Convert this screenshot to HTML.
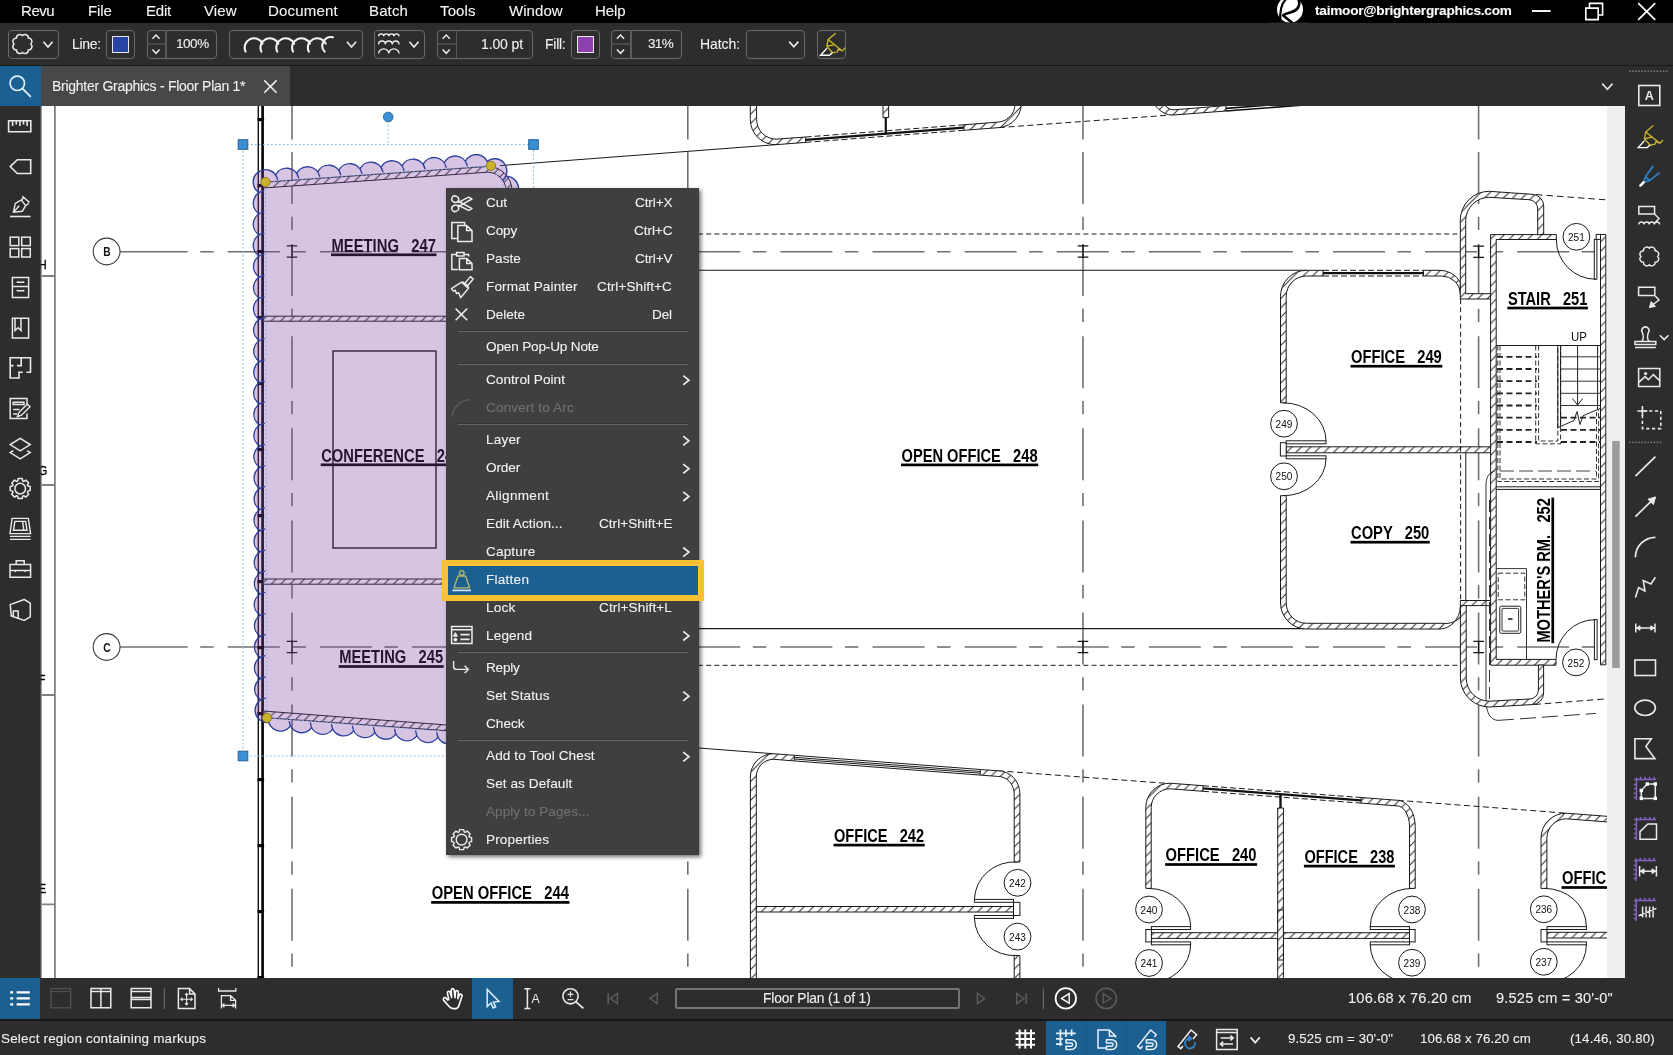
<!DOCTYPE html>
<html><head><meta charset="utf-8"><title>Revu - Floor Plan</title>
<style>
html,body{margin:0;padding:0;}
body{width:1673px;height:1055px;position:relative;overflow:hidden;background:#2d2d2d;font-family:"Liberation Sans",sans-serif;}
.t{position:absolute;white-space:pre;line-height:20px;height:20px;}
.abs{position:absolute;}
.box{position:absolute;box-sizing:border-box;border:1.5px solid #6a6a6a;border-radius:4px;}
svg{position:absolute;left:0;top:0;overflow:visible;will-change:transform;}
.t{will-change:transform;-webkit-text-stroke:0.1px currentColor;}
</style></head>
<body>
<div class="abs" style="left:0;top:0;width:1673px;height:22.5px;background:#000"></div>
<span class="t " style="left:21.30px;top:1.17px;font-size:15px;letter-spacing:-0.454px;color:#f5f5f5;">Revu</span>
<span class="t " style="left:87.90px;top:1.17px;font-size:15px;letter-spacing:-0.093px;color:#f5f5f5;">File</span>
<span class="t " style="left:145.60px;top:1.17px;font-size:15px;letter-spacing:-0.212px;color:#f5f5f5;">Edit</span>
<span class="t " style="left:203.90px;top:1.17px;font-size:15px;letter-spacing:0.089px;color:#f5f5f5;">View</span>
<span class="t " style="left:267.90px;top:1.17px;font-size:15px;letter-spacing:0.179px;color:#f5f5f5;">Document</span>
<span class="t " style="left:369.00px;top:1.17px;font-size:15px;letter-spacing:0.128px;color:#f5f5f5;">Batch</span>
<span class="t " style="left:440.30px;top:1.17px;font-size:15px;letter-spacing:0.136px;color:#f5f5f5;">Tools</span>
<span class="t " style="left:508.50px;top:1.17px;font-size:15px;letter-spacing:0.058px;color:#f5f5f5;">Window</span>
<span class="t " style="left:595.40px;top:1.17px;font-size:15px;letter-spacing:-0.063px;color:#f5f5f5;">Help</span>
<span class="t " style="left:1314.60px;top:1.14px;font-size:13.6px;letter-spacing:-0.223px;color:#ffffff;font-weight:bold;">taimoor@brightergraphics.com</span>
<div class="abs" style="left:0;top:22.5px;width:1673px;height:42.5px;background:#2d2d2d"></div>
<div class="abs" style="left:0;top:64.5px;width:1673px;height:1.5px;background:#181818"></div>
<div class="box" style="left:8px;top:29.5px;width:51px;height:29px"></div>
<div class="box" style="left:106px;top:29.5px;width:29px;height:29px"></div>
<div class="box" style="left:147px;top:29.5px;width:70px;height:29px"></div>
<div class="box" style="left:229px;top:29.5px;width:134px;height:29px"></div>
<div class="box" style="left:374px;top:29.5px;width:51px;height:29px"></div>
<div class="box" style="left:437px;top:29.5px;width:96px;height:29px"></div>
<div class="box" style="left:571px;top:29.5px;width:29px;height:29px"></div>
<div class="box" style="left:611px;top:29.5px;width:71px;height:29px"></div>
<div class="box" style="left:746px;top:29.5px;width:59px;height:29px"></div>
<div class="box" style="left:816.5px;top:29.5px;width:29.0px;height:29px"></div>
<div class="abs" style="left:165px;top:30px;width:1.5px;height:28px;background:#5a5a5a"></div>
<div class="abs" style="left:455.5px;top:30px;width:1.5px;height:28px;background:#5a5a5a"></div>
<div class="abs" style="left:630px;top:30px;width:1.5px;height:28px;background:#5a5a5a"></div>
<div class="abs" style="left:112px;top:35.5px;width:15px;height:15px;background:#2743a6;border:1.5px solid #e8e8e8"></div>
<div class="abs" style="left:577px;top:35.5px;width:15px;height:15px;background:#8e3fb0;border:1.5px solid #e8e8e8"></div>
<span class="t " style="left:71.60px;top:33.85px;font-size:14px;letter-spacing:-0.312px;color:#f0f0f0;">Line:</span>
<span class="t " style="left:175.70px;top:33.84px;font-size:13.5px;letter-spacing:-0.457px;color:#f0f0f0;">100%</span>
<span class="t " style="left:481.30px;top:33.85px;font-size:14px;letter-spacing:-0.116px;color:#f0f0f0;">1.00 pt</span>
<span class="t " style="left:544.50px;top:33.85px;font-size:14px;letter-spacing:-0.255px;color:#f0f0f0;">Fill:</span>
<span class="t " style="left:648.00px;top:33.84px;font-size:13.5px;letter-spacing:-0.673px;color:#f0f0f0;">31%</span>
<span class="t " style="left:699.70px;top:33.85px;font-size:14px;letter-spacing:-0.077px;color:#f0f0f0;">Hatch:</span>
<div class="abs" style="left:0;top:66px;width:1673px;height:40px;background:#2d2d2d"></div>
<div class="abs" style="left:0;top:66px;width:40.5px;height:40px;background:#1c5f91"></div>
<div class="abs" style="left:40.5px;top:66px;width:249.5px;height:40px;background:#484848"></div>
<span class="t " style="left:51.50px;top:75.85px;font-size:14px;letter-spacing:-0.273px;color:#f0f0f0;">Brighter Graphics - Floor Plan 1*</span>
<div class="abs" style="left:0;top:106px;width:40.5px;height:872px;background:#2d2d2d"></div>
<div class="abs" style="left:1625px;top:66px;width:48px;height:954px;background:#2d2d2d"></div>
<div class="abs" style="left:0;top:978px;width:1673px;height:42px;background:#2d2d2d"></div>
<div class="abs" style="left:0;top:978px;width:40.3px;height:41.5px;background:#1c5f91"></div>
<div class="abs" style="left:472px;top:978px;width:40.5px;height:41.5px;background:#1c5f91"></div>
<div class="abs" style="left:0;top:1019px;width:1673px;height:2px;background:#161616"></div>
<div class="box" style="left:674.8px;top:987.8px;width:285px;height:21.6px;border:2px solid #747474;border-radius:2.5px"></div>
<span class="t " style="left:763.10px;top:988.55px;font-size:13.8px;letter-spacing:-0.150px;color:#f0f0f0;">Floor Plan (1 of 1)</span>
<span class="t " style="left:1348.40px;top:987.86px;font-size:14.6px;letter-spacing:0.216px;color:#f0f0f0;">106.68 x 76.20 cm</span>
<span class="t " style="left:1495.70px;top:987.86px;font-size:14.6px;letter-spacing:0.183px;color:#f0f0f0;">9.525 cm = 30'-0&quot;</span>
<div class="abs" style="left:0;top:1021px;width:1673px;height:34px;background:#2d2d2d"></div>
<div class="abs" style="left:1046px;top:1021px;width:120.3px;height:34px;background:#1c5f91"></div>
<span class="t " style="left:0.60px;top:1029.24px;font-size:13.5px;letter-spacing:0.174px;color:#f0f0f0;">Select region containing markups</span>
<span class="t " style="left:1288.20px;top:1029.24px;font-size:13.3px;letter-spacing:0.074px;color:#f0f0f0;">9.525 cm = 30'-0&quot;</span>
<span class="t " style="left:1420.00px;top:1029.24px;font-size:13.3px;letter-spacing:0.092px;color:#f0f0f0;">106.68 x 76.20 cm</span>
<span class="t " style="left:1569.70px;top:1029.24px;font-size:13.3px;letter-spacing:0.142px;color:#f0f0f0;">(14.46, 30.80)</span>
<svg width="1673" height="1055" viewBox="0 0 1673 1055">
<defs>
<clipPath id="cv"><rect x="40.5" y="106" width="1584.5" height="872"/></clipPath>
<clipPath id="pg"><rect x="40.5" y="106" width="1566.5" height="872"/></clipPath>
<pattern id="hat" width="9.4" height="9.4" patternUnits="userSpaceOnUse"><rect width="9.4" height="9.4" fill="#fff"/><path d="M-2,2 L2,-2 M0,9.4 L9.4,0 M7.4,11.4 L11.4,7.4" stroke="#222" stroke-width="0.95"/></pattern>
</defs>
<g clip-path="url(#cv)">
<rect x="40.5" y="106" width="1584.5" height="872" fill="#fff"/>
<rect x="1607" y="106" width="18" height="872" fill="#efefef"/>
<rect x="1612.2" y="441" width="7.5" height="227" fill="#9b9b9b"/>
<g clip-path="url(#pg)">
<line x1="40.9" y1="106" x2="40.9" y2="978" stroke="#000" stroke-width="1" />
<line x1="54.9" y1="106" x2="54.9" y2="978" stroke="#808080" stroke-width="1.8" />
<line x1="42" y1="276" x2="54.9" y2="276" stroke="#808080" stroke-width="1.8" />
<line x1="42" y1="485" x2="54.9" y2="485" stroke="#808080" stroke-width="1.8" />
<line x1="42" y1="695" x2="54.9" y2="695" stroke="#808080" stroke-width="1.8" />
<line x1="42" y1="904.4" x2="54.9" y2="904.4" stroke="#808080" stroke-width="1.8" />
<text transform="translate(38.6,268.6) scale(.83,1)" font-size="13.7" fill="#000" stroke="#000" stroke-width=".35">H</text>
<text transform="translate(38.6,474.7) scale(.83,1)" font-size="13.7" fill="#000" stroke="#000" stroke-width=".35">G</text>
<text transform="translate(38.6,684.2) scale(.83,1)" font-size="13.7" fill="#000" stroke="#000" stroke-width=".35">F</text>
<text transform="translate(38.6,893.4) scale(.83,1)" font-size="13.7" fill="#000" stroke="#000" stroke-width=".35">E</text>
<line x1="292" y1="106" x2="292" y2="139.6" stroke="#707070" stroke-width="1.6" /><line x1="292" y1="152.0" x2="292" y2="204.0" stroke="#707070" stroke-width="1.6" /><line x1="292" y1="216.7" x2="292" y2="230.0" stroke="#707070" stroke-width="1.6" /><line x1="292" y1="244.1" x2="292" y2="296.1" stroke="#707070" stroke-width="1.6" /><line x1="292" y1="308.8" x2="292" y2="322.1" stroke="#707070" stroke-width="1.6" /><line x1="292" y1="336.2" x2="292" y2="388.2" stroke="#707070" stroke-width="1.6" /><line x1="292" y1="400.9" x2="292" y2="414.2" stroke="#707070" stroke-width="1.6" /><line x1="292" y1="428.29999999999995" x2="292" y2="480.29999999999995" stroke="#707070" stroke-width="1.6" /><line x1="292" y1="492.99999999999994" x2="292" y2="506.29999999999995" stroke="#707070" stroke-width="1.6" /><line x1="292" y1="520.4" x2="292" y2="572.4" stroke="#707070" stroke-width="1.6" /><line x1="292" y1="585.1" x2="292" y2="598.4" stroke="#707070" stroke-width="1.6" /><line x1="292" y1="612.5" x2="292" y2="664.5" stroke="#707070" stroke-width="1.6" /><line x1="292" y1="677.2" x2="292" y2="690.5" stroke="#707070" stroke-width="1.6" /><line x1="292" y1="704.6" x2="292" y2="756.6" stroke="#707070" stroke-width="1.6" /><line x1="292" y1="769.3000000000001" x2="292" y2="782.6" stroke="#707070" stroke-width="1.6" /><line x1="292" y1="796.7" x2="292" y2="848.7" stroke="#707070" stroke-width="1.6" /><line x1="292" y1="861.4000000000001" x2="292" y2="874.7" stroke="#707070" stroke-width="1.6" /><line x1="292" y1="888.8000000000001" x2="292" y2="940.8000000000001" stroke="#707070" stroke-width="1.6" /><line x1="292" y1="953.5000000000001" x2="292" y2="966.8000000000001" stroke="#707070" stroke-width="1.6" />
<line x1="687.8" y1="106" x2="687.8" y2="139.6" stroke="#707070" stroke-width="1.6" /><line x1="687.8" y1="152.0" x2="687.8" y2="204.0" stroke="#707070" stroke-width="1.6" /><line x1="687.8" y1="216.7" x2="687.8" y2="230.0" stroke="#707070" stroke-width="1.6" /><line x1="687.8" y1="244.1" x2="687.8" y2="296.1" stroke="#707070" stroke-width="1.6" /><line x1="687.8" y1="308.8" x2="687.8" y2="322.1" stroke="#707070" stroke-width="1.6" /><line x1="687.8" y1="336.2" x2="687.8" y2="388.2" stroke="#707070" stroke-width="1.6" /><line x1="687.8" y1="400.9" x2="687.8" y2="414.2" stroke="#707070" stroke-width="1.6" /><line x1="687.8" y1="428.29999999999995" x2="687.8" y2="480.29999999999995" stroke="#707070" stroke-width="1.6" /><line x1="687.8" y1="492.99999999999994" x2="687.8" y2="506.29999999999995" stroke="#707070" stroke-width="1.6" /><line x1="687.8" y1="520.4" x2="687.8" y2="572.4" stroke="#707070" stroke-width="1.6" /><line x1="687.8" y1="585.1" x2="687.8" y2="598.4" stroke="#707070" stroke-width="1.6" /><line x1="687.8" y1="612.5" x2="687.8" y2="664.5" stroke="#707070" stroke-width="1.6" /><line x1="687.8" y1="677.2" x2="687.8" y2="690.5" stroke="#707070" stroke-width="1.6" /><line x1="687.8" y1="704.6" x2="687.8" y2="756.6" stroke="#707070" stroke-width="1.6" /><line x1="687.8" y1="769.3000000000001" x2="687.8" y2="782.6" stroke="#707070" stroke-width="1.6" /><line x1="687.8" y1="796.7" x2="687.8" y2="848.7" stroke="#707070" stroke-width="1.6" /><line x1="687.8" y1="861.4000000000001" x2="687.8" y2="874.7" stroke="#707070" stroke-width="1.6" /><line x1="687.8" y1="888.8000000000001" x2="687.8" y2="940.8000000000001" stroke="#707070" stroke-width="1.6" /><line x1="687.8" y1="953.5000000000001" x2="687.8" y2="966.8000000000001" stroke="#707070" stroke-width="1.6" />
<line x1="1083" y1="106" x2="1083" y2="139.6" stroke="#707070" stroke-width="1.6" /><line x1="1083" y1="152.0" x2="1083" y2="204.0" stroke="#707070" stroke-width="1.6" /><line x1="1083" y1="216.7" x2="1083" y2="230.0" stroke="#707070" stroke-width="1.6" /><line x1="1083" y1="244.1" x2="1083" y2="296.1" stroke="#707070" stroke-width="1.6" /><line x1="1083" y1="308.8" x2="1083" y2="322.1" stroke="#707070" stroke-width="1.6" /><line x1="1083" y1="336.2" x2="1083" y2="388.2" stroke="#707070" stroke-width="1.6" /><line x1="1083" y1="400.9" x2="1083" y2="414.2" stroke="#707070" stroke-width="1.6" /><line x1="1083" y1="428.29999999999995" x2="1083" y2="480.29999999999995" stroke="#707070" stroke-width="1.6" /><line x1="1083" y1="492.99999999999994" x2="1083" y2="506.29999999999995" stroke="#707070" stroke-width="1.6" /><line x1="1083" y1="520.4" x2="1083" y2="572.4" stroke="#707070" stroke-width="1.6" /><line x1="1083" y1="585.1" x2="1083" y2="598.4" stroke="#707070" stroke-width="1.6" /><line x1="1083" y1="612.5" x2="1083" y2="664.5" stroke="#707070" stroke-width="1.6" /><line x1="1083" y1="677.2" x2="1083" y2="690.5" stroke="#707070" stroke-width="1.6" /><line x1="1083" y1="704.6" x2="1083" y2="756.6" stroke="#707070" stroke-width="1.6" /><line x1="1083" y1="769.3000000000001" x2="1083" y2="782.6" stroke="#707070" stroke-width="1.6" /><line x1="1083" y1="796.7" x2="1083" y2="848.7" stroke="#707070" stroke-width="1.6" /><line x1="1083" y1="861.4000000000001" x2="1083" y2="874.7" stroke="#707070" stroke-width="1.6" /><line x1="1083" y1="888.8000000000001" x2="1083" y2="940.8000000000001" stroke="#707070" stroke-width="1.6" /><line x1="1083" y1="953.5000000000001" x2="1083" y2="966.8000000000001" stroke="#707070" stroke-width="1.6" />
<line x1="1478.6" y1="106" x2="1478.6" y2="139.6" stroke="#707070" stroke-width="1.6" /><line x1="1478.6" y1="152.0" x2="1478.6" y2="204.0" stroke="#707070" stroke-width="1.6" /><line x1="1478.6" y1="216.7" x2="1478.6" y2="230.0" stroke="#707070" stroke-width="1.6" /><line x1="1478.6" y1="244.1" x2="1478.6" y2="296.1" stroke="#707070" stroke-width="1.6" /><line x1="1478.6" y1="308.8" x2="1478.6" y2="322.1" stroke="#707070" stroke-width="1.6" /><line x1="1478.6" y1="336.2" x2="1478.6" y2="388.2" stroke="#707070" stroke-width="1.6" /><line x1="1478.6" y1="400.9" x2="1478.6" y2="414.2" stroke="#707070" stroke-width="1.6" /><line x1="1478.6" y1="428.29999999999995" x2="1478.6" y2="480.29999999999995" stroke="#707070" stroke-width="1.6" /><line x1="1478.6" y1="492.99999999999994" x2="1478.6" y2="506.29999999999995" stroke="#707070" stroke-width="1.6" /><line x1="1478.6" y1="520.4" x2="1478.6" y2="572.4" stroke="#707070" stroke-width="1.6" /><line x1="1478.6" y1="585.1" x2="1478.6" y2="598.4" stroke="#707070" stroke-width="1.6" /><line x1="1478.6" y1="612.5" x2="1478.6" y2="664.5" stroke="#707070" stroke-width="1.6" /><line x1="1478.6" y1="677.2" x2="1478.6" y2="690.5" stroke="#707070" stroke-width="1.6" /><line x1="1478.6" y1="704.6" x2="1478.6" y2="756.6" stroke="#707070" stroke-width="1.6" /><line x1="1478.6" y1="769.3000000000001" x2="1478.6" y2="782.6" stroke="#707070" stroke-width="1.6" /><line x1="1478.6" y1="796.7" x2="1478.6" y2="848.7" stroke="#707070" stroke-width="1.6" /><line x1="1478.6" y1="861.4000000000001" x2="1478.6" y2="874.7" stroke="#707070" stroke-width="1.6" /><line x1="1478.6" y1="888.8000000000001" x2="1478.6" y2="940.8000000000001" stroke="#707070" stroke-width="1.6" /><line x1="1478.6" y1="953.5000000000001" x2="1478.6" y2="966.8000000000001" stroke="#707070" stroke-width="1.6" />
<line x1="120" y1="251.7" x2="187.7" y2="251.7" stroke="#707070" stroke-width="1.6" />
<line x1="200.2" y1="251.7" x2="213.7" y2="251.7" stroke="#707070" stroke-width="1.6" /><line x1="227.79999999999998" y1="251.7" x2="279.79999999999995" y2="251.7" stroke="#707070" stroke-width="1.6" /><line x1="292.29999999999995" y1="251.7" x2="305.79999999999995" y2="251.7" stroke="#707070" stroke-width="1.6" /><line x1="319.9" y1="251.7" x2="371.9" y2="251.7" stroke="#707070" stroke-width="1.6" /><line x1="384.4" y1="251.7" x2="397.9" y2="251.7" stroke="#707070" stroke-width="1.6" /><line x1="412.0" y1="251.7" x2="464.0" y2="251.7" stroke="#707070" stroke-width="1.6" /><line x1="476.5" y1="251.7" x2="490.0" y2="251.7" stroke="#707070" stroke-width="1.6" /><line x1="504.1" y1="251.7" x2="556.1" y2="251.7" stroke="#707070" stroke-width="1.6" /><line x1="568.6" y1="251.7" x2="582.1" y2="251.7" stroke="#707070" stroke-width="1.6" /><line x1="596.2" y1="251.7" x2="648.2" y2="251.7" stroke="#707070" stroke-width="1.6" /><line x1="660.7" y1="251.7" x2="674.2" y2="251.7" stroke="#707070" stroke-width="1.6" /><line x1="688.3000000000001" y1="251.7" x2="740.3000000000001" y2="251.7" stroke="#707070" stroke-width="1.6" /><line x1="752.8000000000001" y1="251.7" x2="766.3000000000001" y2="251.7" stroke="#707070" stroke-width="1.6" /><line x1="780.4000000000001" y1="251.7" x2="832.4000000000001" y2="251.7" stroke="#707070" stroke-width="1.6" /><line x1="844.9000000000001" y1="251.7" x2="858.4000000000001" y2="251.7" stroke="#707070" stroke-width="1.6" /><line x1="872.5000000000001" y1="251.7" x2="924.5000000000001" y2="251.7" stroke="#707070" stroke-width="1.6" /><line x1="937.0000000000001" y1="251.7" x2="950.5000000000001" y2="251.7" stroke="#707070" stroke-width="1.6" /><line x1="964.6000000000001" y1="251.7" x2="1016.6000000000001" y2="251.7" stroke="#707070" stroke-width="1.6" /><line x1="1029.1000000000001" y1="251.7" x2="1042.6000000000001" y2="251.7" stroke="#707070" stroke-width="1.6" /><line x1="1056.7" y1="251.7" x2="1108.7" y2="251.7" stroke="#707070" stroke-width="1.6" /><line x1="1121.2" y1="251.7" x2="1134.7" y2="251.7" stroke="#707070" stroke-width="1.6" /><line x1="1148.8" y1="251.7" x2="1200.8" y2="251.7" stroke="#707070" stroke-width="1.6" /><line x1="1213.3" y1="251.7" x2="1226.8" y2="251.7" stroke="#707070" stroke-width="1.6" /><line x1="1240.8999999999999" y1="251.7" x2="1292.8999999999999" y2="251.7" stroke="#707070" stroke-width="1.6" /><line x1="1305.3999999999999" y1="251.7" x2="1318.8999999999999" y2="251.7" stroke="#707070" stroke-width="1.6" /><line x1="1332.9999999999998" y1="251.7" x2="1384.9999999999998" y2="251.7" stroke="#707070" stroke-width="1.6" /><line x1="1397.4999999999998" y1="251.7" x2="1410.9999999999998" y2="251.7" stroke="#707070" stroke-width="1.6" /><line x1="1425.0999999999997" y1="251.7" x2="1477.0999999999997" y2="251.7" stroke="#707070" stroke-width="1.6" /><line x1="1489.5999999999997" y1="251.7" x2="1503.0999999999997" y2="251.7" stroke="#707070" stroke-width="1.6" /><line x1="1517.1999999999996" y1="251.7" x2="1569.1999999999996" y2="251.7" stroke="#707070" stroke-width="1.6" /><line x1="1581.6999999999996" y1="251.7" x2="1595.1999999999996" y2="251.7" stroke="#707070" stroke-width="1.6" />
<line x1="120" y1="647" x2="187.7" y2="647" stroke="#707070" stroke-width="1.6" />
<line x1="200.2" y1="647" x2="213.7" y2="647" stroke="#707070" stroke-width="1.6" /><line x1="227.79999999999998" y1="647" x2="279.79999999999995" y2="647" stroke="#707070" stroke-width="1.6" /><line x1="292.29999999999995" y1="647" x2="305.79999999999995" y2="647" stroke="#707070" stroke-width="1.6" /><line x1="319.9" y1="647" x2="371.9" y2="647" stroke="#707070" stroke-width="1.6" /><line x1="384.4" y1="647" x2="397.9" y2="647" stroke="#707070" stroke-width="1.6" /><line x1="412.0" y1="647" x2="464.0" y2="647" stroke="#707070" stroke-width="1.6" /><line x1="476.5" y1="647" x2="490.0" y2="647" stroke="#707070" stroke-width="1.6" /><line x1="504.1" y1="647" x2="556.1" y2="647" stroke="#707070" stroke-width="1.6" /><line x1="568.6" y1="647" x2="582.1" y2="647" stroke="#707070" stroke-width="1.6" /><line x1="596.2" y1="647" x2="648.2" y2="647" stroke="#707070" stroke-width="1.6" /><line x1="660.7" y1="647" x2="674.2" y2="647" stroke="#707070" stroke-width="1.6" /><line x1="688.3000000000001" y1="647" x2="740.3000000000001" y2="647" stroke="#707070" stroke-width="1.6" /><line x1="752.8000000000001" y1="647" x2="766.3000000000001" y2="647" stroke="#707070" stroke-width="1.6" /><line x1="780.4000000000001" y1="647" x2="832.4000000000001" y2="647" stroke="#707070" stroke-width="1.6" /><line x1="844.9000000000001" y1="647" x2="858.4000000000001" y2="647" stroke="#707070" stroke-width="1.6" /><line x1="872.5000000000001" y1="647" x2="924.5000000000001" y2="647" stroke="#707070" stroke-width="1.6" /><line x1="937.0000000000001" y1="647" x2="950.5000000000001" y2="647" stroke="#707070" stroke-width="1.6" /><line x1="964.6000000000001" y1="647" x2="1016.6000000000001" y2="647" stroke="#707070" stroke-width="1.6" /><line x1="1029.1000000000001" y1="647" x2="1042.6000000000001" y2="647" stroke="#707070" stroke-width="1.6" /><line x1="1056.7" y1="647" x2="1108.7" y2="647" stroke="#707070" stroke-width="1.6" /><line x1="1121.2" y1="647" x2="1134.7" y2="647" stroke="#707070" stroke-width="1.6" /><line x1="1148.8" y1="647" x2="1200.8" y2="647" stroke="#707070" stroke-width="1.6" /><line x1="1213.3" y1="647" x2="1226.8" y2="647" stroke="#707070" stroke-width="1.6" /><line x1="1240.8999999999999" y1="647" x2="1292.8999999999999" y2="647" stroke="#707070" stroke-width="1.6" /><line x1="1305.3999999999999" y1="647" x2="1318.8999999999999" y2="647" stroke="#707070" stroke-width="1.6" /><line x1="1332.9999999999998" y1="647" x2="1384.9999999999998" y2="647" stroke="#707070" stroke-width="1.6" /><line x1="1397.4999999999998" y1="647" x2="1410.9999999999998" y2="647" stroke="#707070" stroke-width="1.6" /><line x1="1425.0999999999997" y1="647" x2="1477.0999999999997" y2="647" stroke="#707070" stroke-width="1.6" /><line x1="1489.5999999999997" y1="647" x2="1503.0999999999997" y2="647" stroke="#707070" stroke-width="1.6" /><line x1="1517.1999999999996" y1="647" x2="1569.1999999999996" y2="647" stroke="#707070" stroke-width="1.6" /><line x1="1581.6999999999996" y1="647" x2="1595.1999999999996" y2="647" stroke="#707070" stroke-width="1.6" />
<circle cx="106.6" cy="251.5" r="13.4" fill="#fff" stroke="#3a3a3a" stroke-width="1.1"/>
<text x="106.9" y="256.2" font-size="12.8" font-weight="bold" text-anchor="middle" fill="#111" transform="translate(106.9,0) scale(.8,1) translate(-106.9,0)">B</text>
<circle cx="106.6" cy="647" r="13.4" fill="#fff" stroke="#3a3a3a" stroke-width="1.1"/>
<text x="106.9" y="651.7" font-size="12.8" font-weight="bold" text-anchor="middle" fill="#111" transform="translate(106.9,0) scale(.8,1) translate(-106.9,0)">C</text>
<path d="M292,245.0V258.0M286.7,245.9H297.3M286.7,257.1H297.3" stroke="#111" stroke-width="1.3" fill="none" />
<path d="M1083,245.0V258.0M1077.7,245.9H1088.3M1077.7,257.1H1088.3" stroke="#111" stroke-width="1.3" fill="none" />
<path d="M1478.6,245.3V258.3M1473.3,246.20000000000002H1483.8999999999999M1473.3,257.40000000000003H1483.8999999999999" stroke="#111" stroke-width="1.3" fill="none" />
<path d="M292,640.5V653.5M286.7,641.4H297.3M286.7,652.6H297.3" stroke="#111" stroke-width="1.3" fill="none" />
<path d="M1083,640.5V653.5M1077.7,641.4H1088.3M1077.7,652.6H1088.3" stroke="#111" stroke-width="1.3" fill="none" />
<path d="M1478.6,640.5V653.5M1473.3,641.4H1483.8999999999999M1473.3,652.6H1483.8999999999999" stroke="#111" stroke-width="1.3" fill="none" />
<line x1="698" y1="234" x2="1461" y2="234" stroke="#1a1a1a" stroke-width="1" stroke-dasharray="5 3.2" />
<line x1="698" y1="270.3" x2="1307" y2="270.3" stroke="#1a1a1a" stroke-width="1.1" />
<line x1="698" y1="628.6" x2="1304" y2="628.6" stroke="#1a1a1a" stroke-width="1.1" />
<line x1="698" y1="665.3" x2="1460.5" y2="665.3" stroke="#1a1a1a" stroke-width="1" stroke-dasharray="5 3.2" />
<line x1="258.3" y1="106" x2="258.3" y2="978" stroke="#111" stroke-width="1.4" />
<line x1="262.6" y1="106" x2="262.6" y2="978" stroke="#000" stroke-width="2.6" />
<rect x="257.5" y="118.0" width="6.6" height="3.2" fill="#000"/>
<rect x="257.5" y="184.0" width="6.6" height="3.2" fill="#000"/>
<rect x="257.5" y="250.0" width="6.6" height="3.2" fill="#000"/>
<rect x="257.5" y="316.0" width="6.6" height="3.2" fill="#000"/>
<rect x="257.5" y="382.0" width="6.6" height="3.2" fill="#000"/>
<rect x="257.5" y="448.0" width="6.6" height="3.2" fill="#000"/>
<rect x="257.5" y="514.0" width="6.6" height="3.2" fill="#000"/>
<rect x="257.5" y="580.0" width="6.6" height="3.2" fill="#000"/>
<rect x="257.5" y="646.0" width="6.6" height="3.2" fill="#000"/>
<rect x="257.5" y="712.0" width="6.6" height="3.2" fill="#000"/>
<rect x="257.5" y="778.0" width="6.6" height="3.2" fill="#000"/>
<rect x="257.5" y="844.0" width="6.6" height="3.2" fill="#000"/>
<rect x="257.5" y="910.0" width="6.6" height="3.2" fill="#000"/>
<rect x="257.5" y="976.0" width="6.6" height="3.2" fill="#000"/>
<path d="M263.2,182.3 L488,166.4 A24.5,24.5 0 0 1 512,190 L512,200 L506,200 L506,190 A18.5,18.5 0 0 0 487.5,172.2 L263.2,188 Z" fill="url(#hat)" stroke="#1a1a1a" stroke-width="1" stroke-linejoin="round"/>
<path d="M263.2,316.2 H520 V321.2 H263.2 Z" fill="url(#hat)" stroke="#1a1a1a" stroke-width="1" stroke-linejoin="round"/>
<path d="M263.2,579 H520 V584.2 H263.2 Z" fill="url(#hat)" stroke="#1a1a1a" stroke-width="1" stroke-linejoin="round"/>
<path d="M263.2,711 L520,730.6 L520,736 L263.2,717.5 Z" fill="url(#hat)" stroke="#1a1a1a" stroke-width="1" stroke-linejoin="round"/>
<rect x="333" y="351" width="103" height="197" fill="none" stroke="#000" stroke-width="1.3"/>
<text transform="translate(331.5,251.6) scale(0.8318,1)" font-size="17.8" font-weight="bold" fill="#000" xml:space="preserve">MEETING   247</text><rect x="331.0" y="253.45" width="105.5" height="2.7" fill="#000"/>
<text transform="translate(321.2,461.6) scale(0.8300,1)" font-size="17.8" font-weight="bold" fill="#000" xml:space="preserve">CONFERENCE   246</text><rect x="320.7" y="463.45" width="141.3922434375" height="2.7" fill="#000"/>
<text transform="translate(339.2,663.3) scale(0.8278,1)" font-size="17.8" font-weight="bold" fill="#000" xml:space="preserve">MEETING   245</text><rect x="338.7" y="665.15" width="105" height="2.7" fill="#000"/>
<text transform="translate(901.5,461.7) scale(0.8245,1)" font-size="17.8" font-weight="bold" fill="#000" xml:space="preserve">OPEN OFFICE   248</text><rect x="901.0" y="463.54999999999995" width="137.2" height="2.7" fill="#000"/>
<text transform="translate(431.7,899.2) scale(0.8312,1)" font-size="17.8" font-weight="bold" fill="#000" xml:space="preserve">OPEN OFFICE   244</text><rect x="431.2" y="901.0500000000001" width="138.3" height="2.7" fill="#000"/>
<line x1="500" y1="165.6" x2="777" y2="144.6" stroke="#1a1a1a" stroke-width="1" />
<line x1="999" y1="127.6" x2="1167" y2="115.3" stroke="#1a1a1a" stroke-width="1" stroke-dasharray="6 3.5" />
<line x1="446" y1="728.7" x2="773" y2="753.7" stroke="#1a1a1a" stroke-width="1" />
<line x1="998" y1="770.8" x2="1170" y2="783.6" stroke="#1a1a1a" stroke-width="1" stroke-dasharray="6 3.5" />
<line x1="1397.6" y1="800.3" x2="1566.4" y2="813.2" stroke="#1a1a1a" stroke-width="1" stroke-dasharray="6 3.5" />
<path d="M1151,98 C1155,107 1162,114.6 1172,115.1 L1226,111 L1226,105.6 L1174,109.8 C1168,109.6 1164,106 1160.5,98 Z" fill="url(#hat)" stroke="#1a1a1a" stroke-width="1" stroke-linejoin="round"/>
<line x1="1226" y1="111" x2="1312" y2="104.4" stroke="#111" stroke-width="1.6" />
<line x1="1226" y1="108.4" x2="1290" y2="103.4" stroke="#111" stroke-width="1.6" />
<path d="M750.3,100 V119.5 A25.1,25.1 0 0 0 777,144.6 L805.6,142.4 L805.6,137 L777,139.1 A19.6,19.6 0 0 1 756.6,119.5 V100 Z" fill="url(#hat)" stroke="#1a1a1a" stroke-width="1" stroke-linejoin="round"/>
<path d="M963.9,130.3 L999,127.6 A24,24 0 0 0 1021,100 L1014.5,100 A18,18 0 0 1 998,122.1 L963.9,124.8 Z" fill="url(#hat)" stroke="#1a1a1a" stroke-width="1" stroke-linejoin="round"/>
<line x1="805.6" y1="139.9" x2="963.9" y2="127.7" stroke="#111" stroke-width="2.2" />
<line x1="805.6" y1="137" x2="963.9" y2="124.8" stroke="#1a1a1a" stroke-width="1" stroke-dasharray="6 3" />
<line x1="805.6" y1="142.4" x2="963.9" y2="130.3" stroke="#1a1a1a" stroke-width="1" stroke-dasharray="6 3" />
<path d="M883,100 H888.6 V117.6 H883 Z" fill="url(#hat)" stroke="#1a1a1a" stroke-width="1" stroke-linejoin="round"/>
<line x1="885.8" y1="117.6" x2="885.8" y2="134" stroke="#111" stroke-width="2.2" />
<path d="M750.4,985 V777 A23,23 0 0 1 773,753.7 L794.3,755.3 L794.3,760.9 L773.5,759.3 A17.3,17.3 0 0 0 756.3,777 V985 Z" fill="url(#hat)" stroke="#1a1a1a" stroke-width="1" stroke-linejoin="round"/>
<path d="M980.3,769.5 L998,770.8 A22,23 0 0 1 1019.9,794 V862 H1014.2 V794 A16.4,17.6 0 0 0 997.6,776.4 L980.3,775.1 Z" fill="url(#hat)" stroke="#1a1a1a" stroke-width="1" stroke-linejoin="round"/>
<line x1="794.3" y1="755.3" x2="980.3" y2="769.5" stroke="#1a1a1a" stroke-width="1" />
<line x1="794.3" y1="760.9" x2="980.3" y2="775.1" stroke="#1a1a1a" stroke-width="1" />
<line x1="794.3" y1="757.3" x2="980.3" y2="771.5" stroke="#1a1a1a" stroke-width="1" />
<line x1="794.3" y1="759" x2="980.3" y2="773.2" stroke="#1a1a1a" stroke-width="1" />
<path d="M756.3,906.5 H1013.5 V912 H756.3 Z" fill="url(#hat)" stroke="#1a1a1a" stroke-width="1" stroke-linejoin="round"/>
<rect x="1013.5" y="902.3" width="6.4" height="13.2" fill="#fff" stroke="#1a1a1a"/>
<rect x="974.4" y="899.4" width="39.1" height="2.9" fill="#fff" stroke="#1a1a1a"/>
<rect x="974.4" y="915.5" width="39.1" height="2.9" fill="#fff" stroke="#1a1a1a"/>
<path d="M1017,862 A40,38.5 0 0 0 974.4,899.4" stroke="#1a1a1a" stroke-width="1" fill="none" />
<path d="M974.4,918.4 A40,38.5 0 0 0 1017,955.5" stroke="#1a1a1a" stroke-width="1" fill="none" />
<path d="M1014.2,955.5 H1019.9 V985 H1014.2 Z" fill="url(#hat)" stroke="#1a1a1a" stroke-width="1" stroke-linejoin="round"/>
<circle cx="1017.5" cy="882.8" r="13.4" fill="#fff" stroke="#1a1a1a" stroke-width="1"/><text transform="translate(1009.1,886.9499999999999) scale(0.876,1)" font-size="11.5" fill="#111">242</text>
<circle cx="1017.5" cy="936.6" r="13.4" fill="#fff" stroke="#1a1a1a" stroke-width="1"/><text transform="translate(1009.1,940.75) scale(0.876,1)" font-size="11.5" fill="#111">243</text>
<text transform="translate(834,841.9) scale(0.8215,1)" font-size="17.8" font-weight="bold" fill="#000" xml:space="preserve">OFFICE   242</text><rect x="833.5" y="843.75" width="91.2" height="2.7" fill="#000"/>
<path d="M1145.8,888.4 V807.5 A24.3,24.3 0 0 1 1170,783.2 L1203,785.7 L1203,791.3 L1170,788.8 A18.8,18.8 0 0 0 1151.2,807.5 V888.4 Z" fill="url(#hat)" stroke="#1a1a1a" stroke-width="1" stroke-linejoin="round"/>
<path d="M1361,797.5 L1397.6,800.3 A18,26 0 0 1 1415.2,826.5 V888.4 H1409.5 V826.5 A12.5,20.5 0 0 0 1397,805.9 L1361,803.1 Z" fill="url(#hat)" stroke="#1a1a1a" stroke-width="1" stroke-linejoin="round"/>
<line x1="1203" y1="788.4" x2="1361" y2="800.3" stroke="#111" stroke-width="2.2" />
<line x1="1203" y1="785.7" x2="1361" y2="797.5" stroke="#1a1a1a" stroke-width="1" stroke-dasharray="6 3" />
<line x1="1203" y1="791.3" x2="1361" y2="803.1" stroke="#1a1a1a" stroke-width="1" stroke-dasharray="6 3" />
<path d="M1277.7,808 H1283.4 V985 H1277.7 Z" fill="url(#hat)" stroke="#1a1a1a" stroke-width="1" stroke-linejoin="round"/>
<line x1="1280.5" y1="794.3" x2="1280.5" y2="808" stroke="#111" stroke-width="2.4" />
<path d="M1151.2,932.7 H1409.5 V938.4 H1151.2 Z" fill="url(#hat)" stroke="#1a1a1a" stroke-width="1" stroke-linejoin="round"/>
<path d="M1277.7,910 H1283.4 V960 H1277.7 Z" fill="url(#hat)" stroke="#1a1a1a" stroke-width="1" stroke-linejoin="round"/>
<rect x="1145.8" y="929.5" width="5.6" height="12.4" fill="#fff" stroke="#1a1a1a"/>
<rect x="1409.5" y="929.5" width="5.6" height="12.4" fill="#fff" stroke="#1a1a1a"/>
<rect x="1151.4" y="926.6" width="39.2" height="2.9" fill="#fff" stroke="#1a1a1a"/>
<rect x="1151.4" y="941.9" width="39.2" height="2.9" fill="#fff" stroke="#1a1a1a"/>
<rect x="1370.3" y="926.6" width="39.2" height="2.9" fill="#fff" stroke="#1a1a1a"/>
<rect x="1370.3" y="941.9" width="39.2" height="2.9" fill="#fff" stroke="#1a1a1a"/>
<path d="M1148.5,888.4 A42,38.2 0 0 1 1190.6,926.6" stroke="#1a1a1a" stroke-width="1" fill="none" />
<path d="M1190.6,944.8 A42,38.2 0 0 1 1148.5,983" stroke="#1a1a1a" stroke-width="1" fill="none" />
<path d="M1412.3,888.4 A42,38.2 0 0 0 1370.3,926.6" stroke="#1a1a1a" stroke-width="1" fill="none" />
<path d="M1370.3,944.8 A42,38.2 0 0 0 1412.3,983" stroke="#1a1a1a" stroke-width="1" fill="none" />
<circle cx="1149" cy="909.5" r="13.4" fill="#fff" stroke="#1a1a1a" stroke-width="1"/><text transform="translate(1140.6,913.65) scale(0.876,1)" font-size="11.5" fill="#111">240</text>
<circle cx="1149" cy="963" r="13.4" fill="#fff" stroke="#1a1a1a" stroke-width="1"/><text transform="translate(1140.6,967.15) scale(0.876,1)" font-size="11.5" fill="#111">241</text>
<circle cx="1412" cy="909.5" r="13.4" fill="#fff" stroke="#1a1a1a" stroke-width="1"/><text transform="translate(1403.6,913.65) scale(0.876,1)" font-size="11.5" fill="#111">238</text>
<circle cx="1412" cy="962.7" r="13.4" fill="#fff" stroke="#1a1a1a" stroke-width="1"/><text transform="translate(1403.6,966.85) scale(0.876,1)" font-size="11.5" fill="#111">239</text>
<text transform="translate(1165.6,861.3) scale(0.8288,1)" font-size="17.8" font-weight="bold" fill="#000" xml:space="preserve">OFFICE   240</text><rect x="1165.1" y="863.15" width="92" height="2.7" fill="#000"/>
<text transform="translate(1304.4,862.9) scale(0.8197,1)" font-size="17.8" font-weight="bold" fill="#000" xml:space="preserve">OFFICE   238</text><rect x="1303.9" y="864.75" width="91" height="2.7" fill="#000"/>
<path d="M1541,888.4 V838 A25,25 0 0 1 1566.4,813.2 L1612,816.7 V822.3 L1566.4,818.8 A19.4,19.4 0 0 0 1546.9,838 V888.4 Z" fill="url(#hat)" stroke="#1a1a1a" stroke-width="1" stroke-linejoin="round"/>
<path d="M1546.9,932.3 H1612 V938 H1546.9 Z" fill="url(#hat)" stroke="#1a1a1a" stroke-width="1" stroke-linejoin="round"/>
<rect x="1541" y="929.5" width="5.9" height="12.4" fill="#fff" stroke="#1a1a1a"/>
<rect x="1547" y="926.6" width="39.4" height="2.9" fill="#fff" stroke="#1a1a1a"/>
<rect x="1547" y="941.9" width="39.4" height="2.9" fill="#fff" stroke="#1a1a1a"/>
<path d="M1544,888.4 A42,38.2 0 0 1 1586.4,926.6" stroke="#1a1a1a" stroke-width="1" fill="none" />
<path d="M1586.4,944.8 A42,38.2 0 0 1 1544,983" stroke="#1a1a1a" stroke-width="1" fill="none" />
<circle cx="1543.8" cy="909.3" r="13.4" fill="#fff" stroke="#1a1a1a" stroke-width="1"/><text transform="translate(1535.3999999999999,913.4499999999999) scale(0.876,1)" font-size="11.5" fill="#111">236</text>
<circle cx="1543.8" cy="961.8" r="13.4" fill="#fff" stroke="#1a1a1a" stroke-width="1"/><text transform="translate(1535.3999999999999,965.9499999999999) scale(0.876,1)" font-size="11.5" fill="#111">237</text>
<text transform="translate(1562,884.3) scale(0.8300,1)" font-size="17.8" font-weight="bold" fill="#000" xml:space="preserve">OFFICE   236</text><rect x="1561.5" y="886.15" width="92.13364984375" height="2.7" fill="#000"/>
<path d="M1280.5,402.8 V296.3 A26,26 0 0 1 1306.5,270.3 H1323 V276 H1306.5 A20.3,20.3 0 0 0 1286.2,296.3 V402.8 Z" fill="url(#hat)" stroke="#1a1a1a" stroke-width="1" stroke-linejoin="round"/>
<path d="M1423.5,270.3 H1440 A23,23 0 0 1 1460.3,282.4 V293.5 A18.6,18.6 0 0 0 1441.5,276 H1423.5 Z" fill="url(#hat)" stroke="#1a1a1a" stroke-width="1" stroke-linejoin="round"/>
<line x1="1323" y1="273.2" x2="1423.5" y2="273.2" stroke="#111" stroke-width="2.2" />
<line x1="1323" y1="270.3" x2="1423.5" y2="270.3" stroke="#1a1a1a" stroke-width="1" stroke-dasharray="6 3" />
<line x1="1323" y1="276" x2="1423.5" y2="276" stroke="#1a1a1a" stroke-width="1" stroke-dasharray="6 3" />
<path d="M1286.2,446.8 H1491 V452.8 H1286.2 Z" fill="url(#hat)" stroke="#1a1a1a" stroke-width="1" stroke-linejoin="round"/>
<rect x="1280.4" y="442.7" width="5.8" height="13.3" fill="#fff" stroke="#1a1a1a"/>
<rect x="1286.2" y="440.8" width="39.8" height="3" fill="#fff" stroke="#1a1a1a"/>
<rect x="1286.2" y="455.8" width="39.8" height="3" fill="#fff" stroke="#1a1a1a"/>
<path d="M1283.3,402.8 A42.7,38 0 0 1 1326,440.8" stroke="#1a1a1a" stroke-width="1" fill="none" />
<path d="M1326,458.8 A42.7,37 0 0 1 1283.3,495.7" stroke="#1a1a1a" stroke-width="1" fill="none" />
<path d="M1280.5,495.7 V603 A26,26 0 0 0 1306.5,629 H1440 A21,24 0 0 0 1460.4,607 L1460.4,600.5 H1491 V605.6 H1466.2 A21,21 0 0 1 1442,623.3 H1306.5 A20.3,20.3 0 0 1 1286.2,603 V495.7 Z" fill="url(#hat)" stroke="#1a1a1a" stroke-width="1" stroke-linejoin="round"/>
<circle cx="1284" cy="423.7" r="13.4" fill="#fff" stroke="#1a1a1a" stroke-width="1"/><text transform="translate(1275.6,427.84999999999997) scale(0.876,1)" font-size="11.5" fill="#111">249</text>
<circle cx="1284" cy="476.3" r="13.4" fill="#fff" stroke="#1a1a1a" stroke-width="1"/><text transform="translate(1275.6,480.45) scale(0.876,1)" font-size="11.5" fill="#111">250</text>
<text transform="translate(1351,363) scale(0.8270,1)" font-size="17.8" font-weight="bold" fill="#000" xml:space="preserve">OFFICE   249</text><rect x="1350.5" y="364.84999999999997" width="91.8" height="2.7" fill="#000"/>
<text transform="translate(1351,539) scale(0.8272,1)" font-size="17.8" font-weight="bold" fill="#000" xml:space="preserve">COPY   250</text><rect x="1350.5" y="540.85" width="79.3" height="2.7" fill="#000"/>
<line x1="1460.6" y1="299" x2="1460.6" y2="600.5" stroke="#1a1a1a" stroke-width="1" stroke-dasharray="5 3.2" />
<line x1="1465.8" y1="453" x2="1465.8" y2="600.5" stroke="#1a1a1a" stroke-width="1" />
<path d="M1460.3,299 V220.3 A29,29 0 0 1 1489.3,191.3 L1532,194.3 A11.7,11.7 0 0 1 1543.7,206 V234.6 H1537.7 V209 A9,9 0 0 0 1529,199.7 L1489.3,197.3 A23.6,23.6 0 0 0 1465.7,220.9 V293.7 H1491 V299 Z" fill="url(#hat)" stroke="#1a1a1a" stroke-width="1" stroke-linejoin="round"/>
<line x1="1536" y1="194.6" x2="1607" y2="199.9" stroke="#1a1a1a" stroke-width="1" stroke-dasharray="6.5 4" />
<path d="M1490.6,234.6 H1556.3 V239.5 H1496.2 V659.4 H1556 V665.2 H1490.6 Z" fill="url(#hat)" stroke="#1a1a1a" stroke-width="1" stroke-linejoin="round"/>
<path d="M1600.5,234.4 H1605.8 V664.8 H1600.5 Z" fill="url(#hat)" stroke="#1a1a1a" stroke-width="1" stroke-linejoin="round"/>
<rect x="1596.2" y="234.4" width="4.3" height="5" fill="#fff" stroke="#1a1a1a"/>
<rect x="1594.3" y="239.4" width="2.6" height="39.8" fill="#fff" stroke="#1a1a1a"/>
<path d="M1556.3,239.5 A39.3,39.7 0 0 0 1595.6,279.2" stroke="#1a1a1a" stroke-width="1" fill="none" />
<circle cx="1576.4" cy="236.8" r="13.4" fill="#fff" stroke="#1a1a1a" stroke-width="1"/><text transform="translate(1568.0,240.95000000000002) scale(0.876,1)" font-size="11.5" fill="#111">251</text>
<text transform="translate(1507.9,304.8) scale(0.8229,1)" font-size="17.8" font-weight="bold" fill="#000" xml:space="preserve">STAIR   251</text><rect x="1507.4" y="306.65" width="80.5" height="2.7" fill="#000"/>
<text transform="translate(1571,341.2) scale(.84,1)" font-size="13.6" fill="#111">UP</text>
<line x1="1496.2" y1="345.5" x2="1600.5" y2="345.5" stroke="#1a1a1a" stroke-width="1" />
<line x1="1497" y1="356.8" x2="1537" y2="356.8" stroke="#222" stroke-width="1.8" stroke-dasharray="6 3.5" />
<line x1="1497" y1="369.0" x2="1537" y2="369.0" stroke="#222" stroke-width="1.8" stroke-dasharray="6 3.5" />
<line x1="1497" y1="381.2" x2="1537" y2="381.2" stroke="#222" stroke-width="1.8" stroke-dasharray="6 3.5" />
<line x1="1497" y1="393.3" x2="1537" y2="393.3" stroke="#222" stroke-width="1.8" stroke-dasharray="6 3.5" />
<line x1="1497" y1="405.5" x2="1537" y2="405.5" stroke="#222" stroke-width="1.8" stroke-dasharray="6 3.5" />
<line x1="1497" y1="417.6" x2="1537" y2="417.6" stroke="#222" stroke-width="1.8" stroke-dasharray="6 3.5" />
<line x1="1497" y1="429.8" x2="1537" y2="429.8" stroke="#222" stroke-width="1.8" stroke-dasharray="6 3.5" />
<line x1="1497" y1="442.0" x2="1537" y2="442.0" stroke="#222" stroke-width="1.8" stroke-dasharray="6 3.5" />
<line x1="1561" y1="356.8" x2="1600" y2="356.8" stroke="#333" stroke-width="1" />
<line x1="1561" y1="369.0" x2="1600" y2="369.0" stroke="#333" stroke-width="1" />
<line x1="1561" y1="381.2" x2="1600" y2="381.2" stroke="#333" stroke-width="1" />
<line x1="1561" y1="393.3" x2="1600" y2="393.3" stroke="#333" stroke-width="1" />
<line x1="1561" y1="405.5" x2="1600" y2="405.5" stroke="#333" stroke-width="1" />
<line x1="1561" y1="417.6" x2="1600" y2="417.6" stroke="#222" stroke-width="1.8" stroke-dasharray="6 3.5" />
<line x1="1561" y1="429.8" x2="1600" y2="429.8" stroke="#222" stroke-width="1.8" stroke-dasharray="6 3.5" />
<line x1="1561" y1="442.0" x2="1600" y2="442.0" stroke="#222" stroke-width="1.8" stroke-dasharray="6 3.5" />
<path d="M1535.7,345.5 V443.8 H1560.6 V345.5 M1538.6,345.5 V441 H1557.8 V345.5" stroke="#333" stroke-width="1" fill="none" stroke-dasharray="5 2.5" />
<line x1="1557.8" y1="345.5" x2="1557.8" y2="428" stroke="#1a1a1a" stroke-width="1" />
<line x1="1560.6" y1="345.5" x2="1560.6" y2="426" stroke="#1a1a1a" stroke-width="1" />
<line x1="1597.6" y1="345.5" x2="1597.6" y2="410" stroke="#1a1a1a" stroke-width="1" />
<path d="M1577.6,345.5 V405 M1572.5,398.5 L1577.6,405 L1582.7,398.5" stroke="#222" stroke-width="1" fill="none" />
<path d="M1557,428 L1574,420.5 L1577,411.5 L1580,424.5 L1583,415.8 L1600,408.5" stroke="#222" stroke-width="1" fill="none" />
<path d="M1497.8,345.5 V481.5 H1598.6 V410 M1500,345.5 V479 H1596.5 V412" stroke="#333" stroke-width="1" fill="none" stroke-dasharray="5 2.5" />
<line x1="1500" y1="471" x2="1596" y2="471" stroke="#444" stroke-width="1" stroke-dasharray="14 5" />
<line x1="1496.2" y1="486.8" x2="1600.5" y2="486.8" stroke="#1a1a1a" stroke-width="1" />
<line x1="1496.2" y1="489.4" x2="1600.5" y2="489.4" stroke="#1a1a1a" stroke-width="1" />
<path d="M1496.2,568.6 H1526.5 V659.4" stroke="#333" stroke-width="1" fill="none" />
<rect x="1498.2" y="573.2" width="26.6" height="26.6" fill="none" stroke="#333" stroke-dasharray="5 2.5"/>
<rect x="1499.8" y="606.2" width="21" height="27.1" rx="1.5" fill="#fff" stroke="#222"/>
<rect x="1502" y="608.4" width="16.6" height="22.7" rx="1" fill="#fff" stroke="#222" stroke-width=".9"/>
<line x1="1508" y1="619" x2="1512.5" y2="619" stroke="#222" stroke-width="1.6" />
<rect x="1594.4" y="619.6" width="2.7" height="40" fill="#fff" stroke="#1a1a1a"/>
<path d="M1556,659.4 A39.5,39.8 0 0 1 1595.5,619.6" stroke="#1a1a1a" stroke-width="1" fill="none" />
<circle cx="1576" cy="662.4" r="13.4" fill="#fff" stroke="#1a1a1a" stroke-width="1"/><text transform="translate(1567.6,666.55) scale(0.876,1)" font-size="11.5" fill="#111">252</text>
<text transform="translate(1549.9,642.6) rotate(-90) scale(0.8247,1)" font-size="17.8" font-weight="bold" fill="#000" xml:space="preserve">MOTHER'S RM.   252</text>
<rect x="1551.4" y="497.6" width="2.7" height="145.6" fill="#000"/>
<path d="M1494.6,471 C1488,473 1486,478 1486,486 V700 C1486,712 1490,720 1498,720.4" stroke="#333" stroke-width="1" fill="none" />
<line x1="1489.5" y1="500" x2="1489.5" y2="700" stroke="#333" stroke-width="1" stroke-dasharray="12 5" />
<line x1="1498" y1="720.4" x2="1596" y2="713.4" stroke="#333" stroke-width="1" stroke-dasharray="16 6" />
<path d="M1460.4,605.6 V678 A29,29 0 0 0 1489.4,707 L1532,704.6 A11.6,11.6 0 0 0 1543.6,693 V665 H1538.4 V690 A9,9 0 0 1 1529.4,699 L1489.4,701.2 A23.2,23.2 0 0 1 1466.2,678 V605.6 Z" fill="url(#hat)" stroke="#1a1a1a" stroke-width="1" stroke-linejoin="round"/>
<line x1="1534.4" y1="704.5" x2="1607" y2="698.8" stroke="#1a1a1a" stroke-width="1" stroke-dasharray="6.5 4" />
<g opacity="0.31" fill="#7f3fa3">
<path d="M265.5,182 L491,165.8 L512,197 L512,736.5 L267,717.8Z"/>
<circle cx="265.5" cy="182.0" r="12.3"/><circle cx="286.6" cy="180.5" r="12.3"/><circle cx="307.7" cy="179.0" r="12.3"/><circle cx="328.7" cy="177.5" r="12.3"/><circle cx="349.8" cy="175.9" r="12.3"/><circle cx="370.9" cy="174.4" r="12.3"/><circle cx="392.0" cy="172.9" r="12.3"/><circle cx="413.0" cy="171.4" r="12.3"/><circle cx="434.1" cy="169.9" r="12.3"/><circle cx="455.2" cy="168.4" r="12.3"/><circle cx="476.3" cy="166.9" r="12.3"/><circle cx="494.5" cy="171.1" r="12.3"/><circle cx="506.3" cy="188.6" r="12.3"/><circle cx="512.0" cy="208.0" r="12.3"/><circle cx="512.0" cy="229.1" r="12.3"/><circle cx="512.0" cy="250.3" r="12.3"/><circle cx="512.0" cy="271.4" r="12.3"/><circle cx="512.0" cy="292.5" r="12.3"/><circle cx="512.0" cy="313.6" r="12.3"/><circle cx="512.0" cy="334.8" r="12.3"/><circle cx="512.0" cy="355.9" r="12.3"/><circle cx="512.0" cy="377.0" r="12.3"/><circle cx="512.0" cy="398.2" r="12.3"/><circle cx="512.0" cy="419.3" r="12.3"/><circle cx="512.0" cy="440.4" r="12.3"/><circle cx="512.0" cy="461.5" r="12.3"/><circle cx="512.0" cy="482.7" r="12.3"/><circle cx="512.0" cy="503.8" r="12.3"/><circle cx="512.0" cy="524.9" r="12.3"/><circle cx="512.0" cy="546.1" r="12.3"/><circle cx="512.0" cy="567.2" r="12.3"/><circle cx="512.0" cy="588.3" r="12.3"/><circle cx="512.0" cy="609.5" r="12.3"/><circle cx="512.0" cy="630.6" r="12.3"/><circle cx="512.0" cy="651.7" r="12.3"/><circle cx="512.0" cy="672.8" r="12.3"/><circle cx="512.0" cy="694.0" r="12.3"/><circle cx="512.0" cy="715.1" r="12.3"/><circle cx="512.0" cy="736.2" r="12.3"/><circle cx="491.2" cy="734.9" r="12.3"/><circle cx="470.1" cy="733.3" r="12.3"/><circle cx="449.1" cy="731.7" r="12.3"/><circle cx="428.0" cy="730.1" r="12.3"/><circle cx="406.9" cy="728.5" r="12.3"/><circle cx="385.9" cy="726.9" r="12.3"/><circle cx="364.8" cy="725.3" r="12.3"/><circle cx="343.7" cy="723.7" r="12.3"/><circle cx="322.7" cy="722.0" r="12.3"/><circle cx="301.6" cy="720.4" r="12.3"/><circle cx="280.5" cy="718.8" r="12.3"/><circle cx="267.0" cy="710.2" r="12.3"/><circle cx="266.9" cy="689.1" r="12.3"/><circle cx="266.9" cy="668.0" r="12.3"/><circle cx="266.8" cy="646.8" r="12.3"/><circle cx="266.7" cy="625.7" r="12.3"/><circle cx="266.7" cy="604.6" r="12.3"/><circle cx="266.6" cy="583.5" r="12.3"/><circle cx="266.6" cy="562.3" r="12.3"/><circle cx="266.5" cy="541.2" r="12.3"/><circle cx="266.4" cy="520.1" r="12.3"/><circle cx="266.4" cy="498.9" r="12.3"/><circle cx="266.3" cy="477.8" r="12.3"/><circle cx="266.3" cy="456.7" r="12.3"/><circle cx="266.2" cy="435.6" r="12.3"/><circle cx="266.2" cy="414.4" r="12.3"/><circle cx="266.1" cy="393.3" r="12.3"/><circle cx="266.0" cy="372.2" r="12.3"/><circle cx="266.0" cy="351.0" r="12.3"/><circle cx="265.9" cy="329.9" r="12.3"/><circle cx="265.9" cy="308.8" r="12.3"/><circle cx="265.8" cy="287.6" r="12.3"/><circle cx="265.7" cy="266.5" r="12.3"/><circle cx="265.7" cy="245.4" r="12.3"/><circle cx="265.6" cy="224.3" r="12.3"/><circle cx="265.6" cy="203.1" r="12.3"/>
</g>
<path d="M259.2,192.6A12.3,12.3 0 1 1 277.5,179.3M275.6,175.0A12.3,12.3 0 0 1 298.6,177.7M296.7,173.4A12.3,12.3 0 0 1 319.6,176.2M317.7,171.9A12.3,12.3 0 0 1 340.7,174.7M338.8,170.4A12.3,12.3 0 0 1 361.8,173.2M359.9,168.9A12.3,12.3 0 0 1 382.9,171.7M381.0,167.4A12.3,12.3 0 0 1 403.9,170.2M402.0,165.9A12.3,12.3 0 0 1 425.0,168.7M423.1,164.4A12.3,12.3 0 0 1 446.1,167.1M444.2,162.8A12.3,12.3 0 0 1 467.2,165.6M465.3,161.3A12.3,12.3 0 0 1 488.5,165.7M487.2,161.2A12.3,12.3 0 0 1 502.9,180.1M505.7,176.3A12.3,12.3 0 0 1 512.3,199.3M515.9,196.3A12.3,12.3 0 0 1 513.9,220.1M518.3,218.6A12.3,12.3 0 0 1 513.9,241.3M518.3,239.7A12.3,12.3 0 0 1 513.9,262.4M518.3,260.8A12.3,12.3 0 0 1 513.9,283.5M518.3,281.9A12.3,12.3 0 0 1 513.9,304.7M518.3,303.1A12.3,12.3 0 0 1 513.9,325.8M518.3,324.2A12.3,12.3 0 0 1 513.9,346.9M518.3,345.3A12.3,12.3 0 0 1 513.9,368.1M518.3,366.5A12.3,12.3 0 0 1 513.9,389.2M518.3,387.6A12.3,12.3 0 0 1 513.9,410.3M518.3,408.7A12.3,12.3 0 0 1 513.9,431.4M518.3,429.9A12.3,12.3 0 0 1 513.9,452.6M518.3,451.0A12.3,12.3 0 0 1 513.9,473.7M518.3,472.1A12.3,12.3 0 0 1 513.9,494.8M518.3,493.2A12.3,12.3 0 0 1 513.9,516.0M518.3,514.4A12.3,12.3 0 0 1 513.9,537.1M518.3,535.5A12.3,12.3 0 0 1 513.9,558.2M518.3,556.6A12.3,12.3 0 0 1 513.9,579.3M518.3,577.8A12.3,12.3 0 0 1 513.9,600.5M518.3,598.9A12.3,12.3 0 0 1 513.9,621.6M518.3,620.0A12.3,12.3 0 0 1 513.9,642.7M518.3,641.1A12.3,12.3 0 0 1 513.9,663.9M518.3,662.3A12.3,12.3 0 0 1 513.9,685.0M518.3,683.4A12.3,12.3 0 0 1 513.9,706.1M518.3,704.5A12.3,12.3 0 0 1 513.9,727.3M518.3,725.7A12.3,12.3 0 1 1 499.8,737.6M501.2,742.1A12.3,12.3 0 0 1 478.9,735.9M480.2,740.4A12.3,12.3 0 0 1 457.9,734.3M459.1,738.8A12.3,12.3 0 0 1 436.8,732.6M438.1,737.2A12.3,12.3 0 0 1 415.7,731.0M417.0,735.6A12.3,12.3 0 0 1 394.7,729.4M395.9,734.0A12.3,12.3 0 0 1 373.6,727.8M374.9,732.3A12.3,12.3 0 0 1 352.5,726.2M353.8,730.7A12.3,12.3 0 0 1 331.5,724.6M332.7,729.1A12.3,12.3 0 0 1 310.4,723.0M311.6,727.5A12.3,12.3 0 0 1 289.3,721.4M290.6,725.9A12.3,12.3 0 0 1 268.3,717.7M268.8,722.4A12.3,12.3 0 0 1 265.1,698.1M260.7,699.7A12.3,12.3 0 0 1 265.0,677.0M260.6,678.6A12.3,12.3 0 0 1 264.9,655.8M260.5,657.4A12.3,12.3 0 0 1 264.9,634.7M260.5,636.3A12.3,12.3 0 0 1 264.8,613.6M260.4,615.2A12.3,12.3 0 0 1 264.8,592.4M260.4,594.0A12.3,12.3 0 0 1 264.7,571.3M260.3,572.9A12.3,12.3 0 0 1 264.6,550.2M260.2,551.8A12.3,12.3 0 0 1 264.6,529.0M260.2,530.7A12.3,12.3 0 0 1 264.5,507.9M260.1,509.5A12.3,12.3 0 0 1 264.5,486.8M260.1,488.4A12.3,12.3 0 0 1 264.4,465.7M260.0,467.3A12.3,12.3 0 0 1 264.4,444.5M259.9,446.1A12.3,12.3 0 0 1 264.3,423.4M259.9,425.0A12.3,12.3 0 0 1 264.2,402.3M259.8,403.9A12.3,12.3 0 0 1 264.2,381.1M259.8,382.7A12.3,12.3 0 0 1 264.1,360.0M259.7,361.6A12.3,12.3 0 0 1 264.1,338.9M259.6,340.5A12.3,12.3 0 0 1 264.0,317.8M259.6,319.4A12.3,12.3 0 0 1 263.9,296.6M259.5,298.2A12.3,12.3 0 0 1 263.9,275.5M259.5,277.1A12.3,12.3 0 0 1 263.8,254.4M259.4,256.0A12.3,12.3 0 0 1 263.8,233.2M259.3,234.8A12.3,12.3 0 0 1 263.7,212.1M259.3,213.7A12.3,12.3 0 0 1 263.6,191.0" fill="none" stroke="#2c3f9e" stroke-width="1.4" stroke-linecap="round"/>
<path d="M265.5,182 L491,165.8 L512,197 L512,736.5 L267,717.8Z" fill="none" stroke="#6db3e6" stroke-width="1" stroke-dasharray="1.6 2.4"/>
<rect x="243" y="144.5" width="290.5" height="611.5" fill="none" stroke="#6db3e6" stroke-width="1" stroke-dasharray="1.6 2.4"/>
<line x1="388.2" y1="121" x2="388.2" y2="144.5" stroke="#6db3e6" stroke-width="1" stroke-dasharray="1.6 2.4"/>
<circle cx="388.2" cy="117" r="4.8" fill="#3b8fd3" stroke="#2c6ea9" stroke-width="1"/>
<rect x="238.2" y="139.7" width="9.6" height="9.6" fill="#3b8fd3" stroke="#24639c" stroke-width="1"/>
<rect x="528.7" y="139.7" width="9.6" height="9.6" fill="#3b8fd3" stroke="#24639c" stroke-width="1"/>
<rect x="238.2" y="751.2" width="9.6" height="9.6" fill="#3b8fd3" stroke="#24639c" stroke-width="1"/>
<rect x="528.7" y="751.2" width="9.6" height="9.6" fill="#3b8fd3" stroke="#24639c" stroke-width="1"/>
<circle cx="265.5" cy="182" r="4.6" fill="#c9b32a" stroke="#8e7c1d" stroke-width="1"/>
<circle cx="491" cy="165.8" r="4.6" fill="#c9b32a" stroke="#8e7c1d" stroke-width="1"/>
<circle cx="267" cy="717.8" r="4.6" fill="#c9b32a" stroke="#8e7c1d" stroke-width="1"/>
</g></g></svg>
<div class="abs" style="left:446.3px;top:188px;width:252.3px;height:667.2px;background:#3f3f3f;box-shadow:2px 2px 4px rgba(0,0,0,.55)"></div>
<div class="abs" style="left:442px;top:560px;width:262px;height:41px;background:#fac233"></div>
<div class="abs" style="left:448.3px;top:566.4px;width:249.7px;height:28.2px;background:#1c5f91"></div>
<span class="t " style="left:486.00px;top:193.34px;font-size:13.6px;letter-spacing:-0.088px;color:#f2f2f2;">Cut</span>
<span class="t " style="left:634.80px;top:193.34px;font-size:13.6px;letter-spacing:-0.111px;color:#f2f2f2;">Ctrl+X</span>
<span class="t " style="left:486.00px;top:220.94px;font-size:13.6px;letter-spacing:-0.137px;color:#f2f2f2;">Copy</span>
<span class="t " style="left:633.80px;top:220.94px;font-size:13.6px;letter-spacing:-0.069px;color:#f2f2f2;">Ctrl+C</span>
<span class="t " style="left:486.00px;top:249.14px;font-size:13.6px;letter-spacing:0.004px;color:#f2f2f2;">Paste</span>
<span class="t " style="left:634.80px;top:249.14px;font-size:13.6px;letter-spacing:-0.111px;color:#f2f2f2;">Ctrl+V</span>
<span class="t " style="left:486.00px;top:276.94px;font-size:13.6px;letter-spacing:0.118px;color:#f2f2f2;">Format Painter</span>
<span class="t " style="left:597.30px;top:276.94px;font-size:13.6px;letter-spacing:0.077px;color:#f2f2f2;">Ctrl+Shift+C</span>
<span class="t " style="left:486.00px;top:304.84px;font-size:13.6px;letter-spacing:-0.036px;color:#f2f2f2;">Delete</span>
<span class="t " style="left:652.40px;top:304.84px;font-size:13.6px;letter-spacing:-0.169px;color:#f2f2f2;">Del</span>
<span class="t " style="left:486.00px;top:337.34px;font-size:13.6px;letter-spacing:-0.179px;color:#f2f2f2;">Open Pop-Up Note</span>
<span class="t " style="left:486.00px;top:369.84px;font-size:13.6px;letter-spacing:0.029px;color:#f2f2f2;">Control Point</span>
<span class="t " style="left:486.00px;top:397.74px;font-size:13.6px;letter-spacing:0.124px;color:#707070;">Convert to Arc</span>
<span class="t " style="left:486.00px;top:430.44px;font-size:13.6px;letter-spacing:0.156px;color:#f2f2f2;">Layer</span>
<span class="t " style="left:486.00px;top:458.34px;font-size:13.6px;letter-spacing:-0.133px;color:#f2f2f2;">Order</span>
<span class="t " style="left:486.00px;top:486.04px;font-size:13.6px;letter-spacing:0.302px;color:#f2f2f2;">Alignment</span>
<span class="t " style="left:486.00px;top:514.04px;font-size:13.6px;letter-spacing:0.072px;color:#f2f2f2;">Edit Action...</span>
<span class="t " style="left:598.80px;top:514.04px;font-size:13.6px;letter-spacing:0.015px;color:#f2f2f2;">Ctrl+Shift+E</span>
<span class="t " style="left:486.00px;top:541.74px;font-size:13.6px;letter-spacing:0.145px;color:#f2f2f2;">Capture</span>
<span class="t " style="left:486.00px;top:569.64px;font-size:13.6px;letter-spacing:0.232px;color:#f2f2f2;">Flatten</span>
<span class="t " style="left:486.00px;top:597.54px;font-size:13.6px;letter-spacing:0.218px;color:#f2f2f2;">Lock</span>
<span class="t " style="left:599.30px;top:597.54px;font-size:13.6px;letter-spacing:0.099px;color:#f2f2f2;">Ctrl+Shift+L</span>
<span class="t " style="left:486.00px;top:625.54px;font-size:13.6px;letter-spacing:0.136px;color:#f2f2f2;">Legend</span>
<span class="t " style="left:486.00px;top:658.24px;font-size:13.6px;letter-spacing:-0.214px;color:#f2f2f2;">Reply</span>
<span class="t " style="left:486.00px;top:685.84px;font-size:13.6px;letter-spacing:0.095px;color:#f2f2f2;">Set Status</span>
<span class="t " style="left:486.00px;top:713.64px;font-size:13.6px;letter-spacing:0.030px;color:#f2f2f2;">Check</span>
<span class="t " style="left:486.00px;top:746.44px;font-size:13.6px;letter-spacing:0.094px;color:#f2f2f2;">Add to Tool Chest</span>
<span class="t " style="left:486.00px;top:774.24px;font-size:13.6px;letter-spacing:0.070px;color:#f2f2f2;">Set as Default</span>
<span class="t " style="left:486.00px;top:802.14px;font-size:13.6px;letter-spacing:0.040px;color:#707070;">Apply to Pages...</span>
<span class="t " style="left:486.00px;top:829.94px;font-size:13.6px;letter-spacing:0.121px;color:#f2f2f2;">Properties</span>
<div class="abs" style="left:457.9px;top:329.70000000000005px;width:230px;height:1.2px;background:#353535"></div>
<div class="abs" style="left:457.9px;top:330.8px;width:230px;height:1.6px;background:#676767"></div>
<div class="abs" style="left:457.9px;top:362.5px;width:230px;height:1.2px;background:#353535"></div>
<div class="abs" style="left:457.9px;top:363.59999999999997px;width:230px;height:1.6px;background:#676767"></div>
<div class="abs" style="left:457.9px;top:422.6px;width:230px;height:1.2px;background:#353535"></div>
<div class="abs" style="left:457.9px;top:423.7px;width:230px;height:1.6px;background:#676767"></div>
<div class="abs" style="left:457.9px;top:650.5px;width:230px;height:1.2px;background:#353535"></div>
<div class="abs" style="left:457.9px;top:651.6px;width:230px;height:1.6px;background:#676767"></div>
<div class="abs" style="left:457.9px;top:738.5px;width:230px;height:1.2px;background:#353535"></div>
<div class="abs" style="left:457.9px;top:739.6px;width:230px;height:1.6px;background:#676767"></div>
<svg width="1673" height="1055" fill="none" stroke="#ececec" stroke-width="1.7"><path d="M683.2,375.6 L688.9,380.2 L683.2,384.8"/><path d="M683.2,436.2 L688.9,440.79999999999995 L683.2,445.4"/><path d="M683.2,464.1 L688.9,468.7 L683.2,473.3"/><path d="M683.2,491.8 L688.9,496.4 L683.2,501.0"/><path d="M683.2,547.5 L688.9,552.1 L683.2,556.7"/><path d="M683.2,631.3 L688.9,635.9 L683.2,640.5"/><path d="M683.2,691.5999999999999 L688.9,696.1999999999999 L683.2,700.8"/><path d="M683.2,752.1999999999999 L688.9,756.8 L683.2,761.4"/></svg>
<svg width="1673" height="1055" viewBox="0 0 1673 1055" fill="none" stroke-linecap="butt">
<ellipse cx="1290" cy="9.5" rx="13" ry="13.2" fill="#fff"/>
<path d="M1286,-1 C1281,4 1279.3,11 1280.5,23" stroke="#000" stroke-width="2.2" fill="none" />
<path d="M1298.5,-0.5 C1301,6 1297,10.5 1291,12.3 C1287,13.5 1284,14 1283.2,15.5 L1293,23.5" stroke="#000" stroke-width="2.6" fill="none" />
<rect x="1270" y="22.5" width="40" height="4" fill="#2d2d2d" stroke="none"/>
<path d="M1531.9,11 H1550.6" stroke="#fff" stroke-width="1.9" fill="none" />
<path d="M1585.8,8.1 H1598.2 V19.6 H1585.8 Z M1589.5,8 V3.4 H1602.6 V15 H1598.4" stroke="#fff" stroke-width="1.6" fill="none" />
<path d="M1638.2,3.2 L1655.2,19.8 M1655.2,3.2 L1638.2,19.8" stroke="#fff" stroke-width="1.7" fill="none" />
<path d="M30.80,44.00A3.4,3.4 0 0 1 28.34,49.94A3.4,3.4 0 0 1 22.40,52.40A3.4,3.4 0 0 1 16.46,49.94A3.4,3.4 0 0 1 14.00,44.00A3.4,3.4 0 0 1 16.46,38.06A3.4,3.4 0 0 1 22.40,35.60A3.4,3.4 0 0 1 28.34,38.06A3.4,3.4 0 0 1 30.80,44.00Z" stroke="#e9e9e9" stroke-width="1.5" fill="none" />
<path d="M43.4,41.8 L48,47.0 L52.6,41.8" stroke="#e9e9e9" stroke-width="1.7" fill="none" />
<path d="M346.9,41.8 L351.5,47.0 L356.1,41.8" stroke="#e9e9e9" stroke-width="1.7" fill="none" />
<path d="M409.4,41.8 L414,47.0 L418.6,41.8" stroke="#e9e9e9" stroke-width="1.7" fill="none" />
<path d="M789.1999999999999,41.6 L793.8,46.800000000000004 L798.4,41.6" stroke="#e9e9e9" stroke-width="1.7" fill="none" />
<path d="M152.4,38.8 L156,35.0 L159.6,38.8" stroke="#e9e9e9" stroke-width="1.5" fill="none" />
<path d="M152.4,49.5 L156,53.3 L159.6,49.5" stroke="#e9e9e9" stroke-width="1.5" fill="none" />
<path d="M442.59999999999997,38.8 L446.2,35.0 L449.8,38.8" stroke="#e9e9e9" stroke-width="1.5" fill="none" />
<path d="M442.59999999999997,49.5 L446.2,53.3 L449.8,49.5" stroke="#e9e9e9" stroke-width="1.5" fill="none" />
<path d="M616.9,38.8 L620.5,35.0 L624.1,38.8" stroke="#e9e9e9" stroke-width="1.5" fill="none" />
<path d="M616.9,49.5 L620.5,53.3 L624.1,49.5" stroke="#e9e9e9" stroke-width="1.5" fill="none" />
<path d="M147.5,44.1 H165" stroke="#5a5a5a" stroke-width="1.3" fill="none" />
<path d="M437.5,44.1 H455.5" stroke="#5a5a5a" stroke-width="1.3" fill="none" />
<path d="M611.5,44.1 H630" stroke="#5a5a5a" stroke-width="1.3" fill="none" />
<path d="M245.6,51.6 A8.7,8.7 0 1 1 262.5,43.6M261.4,51.6 A8.7,8.7 0 1 1 278.29999999999995,43.6M277.2,51.6 A8.7,8.7 0 1 1 294.09999999999997,43.6M293.0,51.6 A8.7,8.7 0 1 1 309.9,43.6M308.8,51.6 A8.7,8.7 0 1 1 325.7,43.6M324.6,51.6 A8.7,8.7 0 0 1 332.90000000000003,37.3" stroke="#f2f2f2" stroke-width="2.1" fill="none" stroke-linecap="round"/>
<path d="M378.6,36.2 a2.55,2.4 0 0 1 5.1,0M383.70000000000005,36.2 a2.55,2.4 0 0 1 5.1,0M388.8,36.2 a2.55,2.4 0 0 1 5.1,0M393.90000000000003,36.2 a2.55,2.4 0 0 1 5.1,0M378.6,44.4 a3.4,3.4 0 0 1 6.8,0M385.40000000000003,44.4 a3.4,3.4 0 0 1 6.8,0M392.20000000000005,44.4 a3.4,3.4 0 0 1 6.8,0M378.6,53.4 a5.1,4.6 0 0 1 10.2,0M388.8,53.4 a5.1,4.6 0 0 1 10.2,0" stroke="#f2f2f2" stroke-width="1.3" fill="none" />
<path d="M835.6,33.2 L828.2,39.5 L842.2,50.9 L845.4,47.6 M828.2,39.5 L826.8,46.4 L832.6,52.8 L837.4,51.8 L838.2,49.4 L842,50.6 M826.8,46.4 L834.5,44.6" stroke="#cdbf2c" stroke-width="1.3" fill="none" transform="translate(0,0)"/><path d="M826.9,48.2 L820.6,55.2 H829.6 L832.4,52.6" stroke="#fff" stroke-width="1.4" fill="none" transform="translate(0,0)"/>
<circle cx="17.3" cy="83.3" r="7.2" stroke="#dff0ff" stroke-width="1.7"/>
<path d="M22.6,88.6 L30.8,96.8" stroke="#dff0ff" stroke-width="1.8" fill="none" />
<path d="M264.2,80.4 L276.6,92.8 M276.6,80.4 L264.2,92.8" stroke="#f0f0f0" stroke-width="1.5" fill="none" />
<path d="M1602.2,83.60000000000001 L1607.4,89.2 L1612.6000000000001,83.60000000000001" stroke="#e9e9e9" stroke-width="1.6" fill="none" />
<path d="M8.6,120.7 H30.8 V131.8 H8.6 Z M12.6,121 V126 M16.3,121 V124.6 M19.9,121 V126 M23.5,121 V124.6 M27.1,121 V126" stroke="#e9e9e9" stroke-width="1.6" fill="none" />
<path d="M10.2,166.6 L17.3,159.7 H30.7 V173.5 H17.3 Z" stroke="#e9e9e9" stroke-width="1.6" fill="none" />
<path d="M10,216.5 H30.6" stroke="#e9e9e9" stroke-width="1.6" fill="none" />
<path d="M13.4,212.3 L15.3,203.4 L21.4,200 L25.6,205.7 L22.3,211.3 Z M21.4,200 L24.2,196.8 M25.6,205.7 L28.9,203.2 M22.3,196.2 L29.5,202.4 M13.6,212 L18.3,206.9" stroke="#e9e9e9" stroke-width="1.4" fill="none" />
<circle cx="18.5" cy="206.6" r="1" fill="#e9e9e9"/>
<rect x="10.2" y="237.2" width="8.6" height="8.4" stroke="#e9e9e9" stroke-width="1.5"/>
<rect x="21.7" y="237.2" width="8.6" height="8.4" stroke="#e9e9e9" stroke-width="1.5"/>
<rect x="10.2" y="248.6" width="8.6" height="8.4" stroke="#e9e9e9" stroke-width="1.5"/>
<rect x="21.7" y="248.6" width="8.6" height="8.4" stroke="#e9e9e9" stroke-width="1.5"/>
<path d="M12.4,277.6 H28.6 V297.4 H12.4 Z M12.4,286.5 H28.6 M17.4,281.3 V282.3 H23.6 V281.3 M17.4,289.8 V290.8 H23.6 V289.8" stroke="#e9e9e9" stroke-width="1.5" fill="none" />
<path d="M12.4,318.3 H28.6 V338 H12.4 Z M15,318.3 V330.6 L18,327.8 L21,330.6 V318.3" stroke="#e9e9e9" stroke-width="1.5" fill="none" />
<path d="M26.4,372.2 H30.5 V357.8 H10.2 V378 H19 V372.2 H22.8 M10.2,365.6 H13.6 M17,365.6 H21.2 V357.8" stroke="#e9e9e9" stroke-width="1.6" fill="none" />
<path d="M27,404.6 V398.5 H10.2 V418.6 H27 V413.6 M13.2,402.2 H24 V404.6 H13.2 Z M13.2,409.4 H19.6 M13.2,414 H17" stroke="#e9e9e9" stroke-width="1.5" fill="none" />
<path d="M17.4,416.6 L18.9,412.6 L27.4,404.1 L30,406.7 L21.5,415.2 Z" stroke="#e9e9e9" stroke-width="1.4" fill="none" />
<path d="M20.2,438.3 L30.2,444.6 L20.2,450.9 L10.2,444.6 Z M13.3,450.6 L10.2,452.6 L20.2,458.9 L30.2,452.6 L27.1,450.6" stroke="#e9e9e9" stroke-width="1.5" fill="none" stroke-linejoin="miter"/>
<path d="M30.20,486.57 L30.20,490.63 L27.79,491.12 L27.35,492.19 L28.70,494.24 L25.84,497.10 L23.79,495.75 L22.72,496.19 L22.23,498.60 L18.17,498.60 L17.68,496.19 L16.61,495.75 L14.56,497.10 L11.70,494.24 L13.05,492.19 L12.61,491.12 L10.20,490.63 L10.20,486.57 L12.61,486.08 L13.05,485.01 L11.70,482.96 L14.56,480.10 L16.61,481.45 L17.68,481.01 L18.17,478.60 L22.23,478.60 L22.72,481.01 L23.79,481.45 L25.84,480.10 L28.70,482.96 L27.35,485.01 L27.79,486.08Z" stroke="#e9e9e9" stroke-width="1.5" fill="none" stroke-linejoin="round"/><circle cx="20.2" cy="488.6" r="5.3" stroke="#e9e9e9" stroke-width="1.5" fill="none"/>
<path d="M12.1,518.4 H28.3 L30.6,533.6 H10 Z M14.9,521.4 H25.6 L27,530.3 H13.4 Z M22.6,521.4 L23.8,530.3 M10,536.4 H30.6 M10,539.4 H30.6" stroke="#e9e9e9" stroke-width="1.4" fill="none" />
<path d="M10,564.5 H30.6 V577.2 H10 Z M16.2,564.5 V560.8 H24.2 V564.5 M10,570.6 H30.6 M15.3,570.6 V572 M25.2,570.6 V572" stroke="#e9e9e9" stroke-width="1.5" fill="none" />
<path d="M10.2,604.6 L24.2,599.5 L30.3,603.2 V616.8 L24.2,620.4 L11.3,616 Z M13.3,616.6 V611 H18.2 V618.3" stroke="#e9e9e9" stroke-width="1.5" fill="none" stroke-linejoin="round"/>
<rect x="1629.20" y="70.5" width="1.5" height="1.5" fill="#7d7d7d"/><rect x="1632.25" y="70.5" width="1.5" height="1.5" fill="#7d7d7d"/><rect x="1635.30" y="70.5" width="1.5" height="1.5" fill="#7d7d7d"/><rect x="1638.35" y="70.5" width="1.5" height="1.5" fill="#7d7d7d"/><rect x="1641.40" y="70.5" width="1.5" height="1.5" fill="#7d7d7d"/><rect x="1644.45" y="70.5" width="1.5" height="1.5" fill="#7d7d7d"/><rect x="1647.50" y="70.5" width="1.5" height="1.5" fill="#7d7d7d"/><rect x="1650.55" y="70.5" width="1.5" height="1.5" fill="#7d7d7d"/><rect x="1653.60" y="70.5" width="1.5" height="1.5" fill="#7d7d7d"/><rect x="1656.65" y="70.5" width="1.5" height="1.5" fill="#7d7d7d"/><rect x="1659.70" y="70.5" width="1.5" height="1.5" fill="#7d7d7d"/><rect x="1662.75" y="70.5" width="1.5" height="1.5" fill="#7d7d7d"/><rect x="1665.80" y="70.5" width="1.5" height="1.5" fill="#7d7d7d"/><rect x="1629.20" y="441.6" width="1.5" height="1.5" fill="#7d7d7d"/><rect x="1632.25" y="441.6" width="1.5" height="1.5" fill="#7d7d7d"/><rect x="1635.30" y="441.6" width="1.5" height="1.5" fill="#7d7d7d"/><rect x="1638.35" y="441.6" width="1.5" height="1.5" fill="#7d7d7d"/><rect x="1641.40" y="441.6" width="1.5" height="1.5" fill="#7d7d7d"/><rect x="1644.45" y="441.6" width="1.5" height="1.5" fill="#7d7d7d"/><rect x="1647.50" y="441.6" width="1.5" height="1.5" fill="#7d7d7d"/><rect x="1650.55" y="441.6" width="1.5" height="1.5" fill="#7d7d7d"/><rect x="1653.60" y="441.6" width="1.5" height="1.5" fill="#7d7d7d"/><rect x="1656.65" y="441.6" width="1.5" height="1.5" fill="#7d7d7d"/><rect x="1659.70" y="441.6" width="1.5" height="1.5" fill="#7d7d7d"/>
<rect x="1638.8" y="85.5" width="21" height="20" stroke="#e9e9e9" stroke-width="1.6"/>
<text x="1649.3" y="99.6" font-family="Liberation Sans" font-weight="bold" font-size="12.6" fill="#e9e9e9" text-anchor="middle">A</text>
<path d="M835.6,33.2 L828.2,39.5 L842.2,50.9 L845.4,47.6 M828.2,39.5 L826.8,46.4 L832.6,52.8 L837.4,51.8 L838.2,49.4 L842,50.6 M826.8,46.4 L834.5,44.6" stroke="#c9b52f" stroke-width="1.3" fill="none" transform="translate(817.6,92.4)"/><path d="M826.9,48.2 L820.6,55.2 H829.6 L832.4,52.6" stroke="#fff" stroke-width="1.4" fill="none" transform="translate(817.6,92.4)"/>
<path d="M1653.4,165.8 L1645.6,176.6 L1643.4,182.6 L1649.6,180.6 L1659.6,172.6 M1645.6,176.6 L1649.6,180.6" stroke="#2f86cf" stroke-width="1.6" fill="none" />
<path d="M1643.6,182.4 L1640.4,185.6" stroke="#fff" stroke-width="2.6" fill="none" stroke-linecap="round"/>
<path d="M1638.8,206.4 H1654.6 V214 H1638.8 Z M1654.6,214 L1659,218.5 L1655.6,222" stroke="#e9e9e9" stroke-width="1.5" fill="none" />
<path d="M1638.8,224.6 a2.6,2.6 0 0 1 5.2,0 a2.6,2.6 0 0 1 5.2,0 a2.6,2.6 0 0 1 5.2,0 a2.6,2.6 0 0 1 5.2,0" stroke="#e9e9e9" stroke-width="1.3" fill="none" />
<path d="M1657.60,256.50A3.4,3.4 0 0 1 1655.17,262.37A3.4,3.4 0 0 1 1649.30,264.80A3.4,3.4 0 0 1 1643.43,262.37A3.4,3.4 0 0 1 1641.00,256.50A3.4,3.4 0 0 1 1643.43,250.63A3.4,3.4 0 0 1 1649.30,248.20A3.4,3.4 0 0 1 1655.17,250.63A3.4,3.4 0 0 1 1657.60,256.50Z" stroke="#e9e9e9" stroke-width="1.5" fill="none" />
<path d="M1638.6,287.3 H1654.8 V295.4 H1638.6 Z M1654.8,295.4 L1659,300 L1652.4,305" stroke="#e9e9e9" stroke-width="1.5" fill="none" />
<path d="M1649.4,307.6 L1651.2,301.6 L1655.4,306.4 Z" stroke="#e9e9e9" stroke-width="1" fill="#e9e9e9" />
<path d="M1635,344.4 V341.6 H1655.8 V344.4 Z M1635,347.4 H1655.8 M1641.6,341.6 C1644.6,338 1643.4,335.4 1642.4,332.6 A3.6,3.6 0 1 1 1648.4,332.6 C1647.4,335.4 1646.2,338 1649.2,341.6" stroke="#e9e9e9" stroke-width="1.5" fill="none" />
<path d="M1659.9,335.2 L1664.2,339.59999999999997 L1668.5,335.2" stroke="#e9e9e9" stroke-width="1.6" fill="none" />
<path d="M1638.6,368.6 H1659.8 V386.4 H1638.6 Z M1638.8,382.4 L1645,376.6 L1648.4,379.8 L1653.4,374.6 L1659.6,380.6" stroke="#e9e9e9" stroke-width="1.5" fill="none" />
<circle cx="1645.6" cy="373.6" r="1.7" fill="#e9e9e9"/>
<path d="M1642.4,411 V428.6 H1660.8 V411 Z" stroke="#e9e9e9" stroke-width="1.6" fill="none" stroke-dasharray="3.2 2.6" stroke-dashoffset="-4"/>
<path d="M1637.4,411 H1647.4 M1642.4,406 V416" stroke="#e9e9e9" stroke-width="1.6" fill="none" />
<path d="M1635.4,476.2 L1655.4,456.6" stroke="#e9e9e9" stroke-width="1.7" fill="none" />
<path d="M1635.4,516.7 L1651.6,500.8" stroke="#e9e9e9" stroke-width="1.7" fill="none" />
<path d="M1655.6,496.9 L1653.4,504.6 L1648,499.2 Z" stroke="#e9e9e9" stroke-width="1" fill="#e9e9e9" />
<path d="M1635.4,557.2 A20,20 0 0 1 1655.4,537.3" stroke="#e9e9e9" stroke-width="1.7" fill="none" />
<path d="M1635.4,597.4 L1638.6,587.6 L1644.9,591 L1643.3,580.6 L1650.9,584 L1655.4,577.2" stroke="#e9e9e9" stroke-width="1.6" fill="none" />
<path d="M1635.6,628 H1655.2 M1635.8,623.4 V632.6 M1655,623.4 V632.6" stroke="#e9e9e9" stroke-width="1.5" fill="none" />
<path d="M1636.4,628 L1640,625.8 V630.2 Z M1654.4,628 L1650.8,625.8 V630.2 Z" stroke="#e9e9e9" stroke-width="1" fill="#e9e9e9" />
<rect x="1634.9" y="660" width="20.6" height="15.5" stroke="#e9e9e9" stroke-width="1.6"/>
<ellipse cx="1645.1" cy="707.8" rx="10.3" ry="7.7" stroke="#e9e9e9" stroke-width="1.6"/>
<path d="M1634.9,738.8 H1651.3 L1645.9,746.6 L1654.9,758.6 H1634.9 Z" stroke="#e9e9e9" stroke-width="1.6" fill="none" />
<path d="M1636.4,777.4 V799.9 M1634.2,779.4 H1656.0M1640.4,776.8 V779.4 M1633.8000000000002,784.4 H1636.4M1645.0000000000002,776.8 V779.4 M1633.8000000000002,788.8 H1636.4M1649.6000000000001,776.8 V779.4 M1633.8000000000002,793.2 H1636.4M1654.2000000000003,776.8 V779.4 M1633.8000000000002,797.6 H1636.4" stroke="#8463c4" stroke-width="1.5" fill="none" />
<path d="M1641.3,798.4 V790.5 L1647.3,784 H1655.3 V798.4 Z" stroke="#e9e9e9" stroke-width="1.5" fill="none" />
<rect x="1639.6" y="796.6999999999999" width="3.4" height="3.4" fill="#fff"/>
<rect x="1639.6" y="788.8" width="3.4" height="3.4" fill="#fff"/>
<rect x="1645.6" y="782.3" width="3.4" height="3.4" fill="#fff"/>
<rect x="1653.6" y="782.3" width="3.4" height="3.4" fill="#fff"/>
<rect x="1653.6" y="796.6999999999999" width="3.4" height="3.4" fill="#fff"/>
<path d="M1636.4,817.6 V840.1 M1634.2,819.6 H1656.0M1640.4,817.0 V819.6 M1633.8000000000002,824.6 H1636.4M1645.0000000000002,817.0 V819.6 M1633.8000000000002,829.0 H1636.4M1649.6000000000001,817.0 V819.6 M1633.8000000000002,833.4000000000001 H1636.4M1654.2000000000003,817.0 V819.6 M1633.8000000000002,837.8000000000001 H1636.4" stroke="#8463c4" stroke-width="1.5" fill="none" />
<path d="M1640,839.3 V831.6 L1647.9,823.9 H1656.5 V839.3 Z" stroke="#e9e9e9" stroke-width="1.5" fill="none" />
<path d="M1636.2,858.4 V880.9 M1634.0,860.4 H1655.8M1640.2,857.8 V860.4 M1633.6000000000001,865.4 H1636.2M1644.8000000000002,857.8 V860.4 M1633.6000000000001,869.8 H1636.2M1649.4,857.8 V860.4 M1633.6000000000001,874.2 H1636.2M1654.0000000000002,857.8 V860.4 M1633.6000000000001,878.6 H1636.2" stroke="#8463c4" stroke-width="1.5" fill="none" />
<path d="M1639.6,866 V876.4 M1656.4,866 V876.4 M1640.4,871.2 H1655.6" stroke="#e9e9e9" stroke-width="1.5" fill="none" />
<path d="M1640.2,871.2 L1644,868.8 V873.6 Z M1655.8,871.2 L1652,868.8 V873.6 Z" stroke="#e9e9e9" stroke-width="1" fill="#e9e9e9" />
<path d="M1636.2,898.4 V920.9 M1634.0,900.4 H1655.8M1640.2,897.8 V900.4 M1633.6000000000001,905.4 H1636.2M1644.8000000000002,897.8 V900.4 M1633.6000000000001,909.8 H1636.2M1649.4,897.8 V900.4 M1633.6000000000001,914.2 H1636.2M1654.0000000000002,897.8 V900.4 M1633.6000000000001,918.6 H1636.2" stroke="#8463c4" stroke-width="1.5" fill="none" />
<path d="M1642.6,906.4 V917.6 M1646.1,906.4 V917.6 M1649.6,906.4 V917.6 M1653.1,906.4 V917.6 M1638.6,915.8 L1656.4,908.4" stroke="#e9e9e9" stroke-width="1.5" fill="none" />
<path d="M10.2,992.4 H13.2 M10.2,998.4 H13.2 M10.2,1004.4 H13.2" stroke="#fff" stroke-width="2.2" fill="none" />
<path d="M16.6,992.4 H29.8 M16.6,998.4 H29.8 M16.6,1004.4 H29.8" stroke="#fff" stroke-width="2.2" fill="none" />
<rect x="51" y="988.6" width="19.6" height="19.2" stroke="#505050" stroke-width="1.4"/><path d="M51,991.6 H70.6" stroke="#505050" stroke-width="1.2"/>
<path d="M91,988.6 H110.8 V1007.8 H91 Z M91,991.4 H110.8 M100.9,988.6 V1007.8" stroke="#e9e9e9" stroke-width="1.5" fill="none" />
<path d="M131.2,988.6 H151 V1007.8 H131.2 Z M131.2,991.4 H151 M131.2,997.4 H151 M131.2,999.6 H151" stroke="#e9e9e9" stroke-width="1.5" fill="none" />
<path d="M164.4,988.4 V1009" stroke="#666" stroke-width="1.3" fill="none" />
<path d="M178.4,988.6 H189.6 L195,994 V1008.4 H178.4 Z M189.6,988.6 V994 H195" stroke="#e9e9e9" stroke-width="1.5" fill="none" />
<path d="M186.6,993.6 V1004.6 M181,999.2 H192.2 M185,995.2 L186.6,993.4 L188.2,995.2 M185,1003.2 L186.6,1005 L188.2,1003.2 M182.6,997.6 L180.8,999.2 L182.6,1000.8 M190.6,997.6 L192.4,999.2 L190.6,1000.8" stroke="#e9e9e9" stroke-width="1.1" fill="none" />
<path d="M218.6,988 V991 H235.8 V988 M221.4,1008.4 V995.6 H230.6 L235.6,1000.4 V1008.4 M230.6,995.6 V1000.4 H235.6 M222.6,1005.4 H234.4 M224.4,1003.6 L222.4,1005.4 L224.4,1007.2 M232.6,1003.6 L234.6,1005.4 L232.6,1007.2" stroke="#e9e9e9" stroke-width="1.3" fill="none" />
<path d="M447.9,1000.4 L446,998 Q444.6,996.9 443.6,998.2 Q442.8,999.4 443.9,1000.6 L449.4,1006.8 Q450.8,1008.6 453.4,1008.6 L455.6,1008.6 Q458.2,1008.4 458.9,1005.6 L461.9,996.4 Q462.4,994.6 461,994.2 Q459.7,993.9 459,995.6 L457.8,998.6 L458.4,992.4 Q458.4,990.6 457,990.5 Q455.6,990.5 455.4,992.2 L455,997.6 L454.2,990.4 Q454,988.6 452.6,988.6 Q451.2,988.7 451.2,990.4 L451.6,997.6 L450.2,992.8 Q449.6,991 448.4,991.3 Q447.1,991.7 447.4,993.4 L448.9,1000.4" stroke="#fff" stroke-width="1.6" fill="none" stroke-linejoin="round"/>
<path d="M487.2,989.4 V1006.6 L491,1003 L493.2,1008 L495.6,1006.9 L493.4,1002.1 L499,1001.5 Z" stroke="#d9eeff" stroke-width="1.5" fill="none" stroke-linejoin="miter"/>
<path d="M527.4,988.8 V1008.6 M524.4,988.8 H530.4 M524.4,1008.6 H530.4" stroke="#e9e9e9" stroke-width="1.5" fill="none" />
<text x="531.4" y="1003" font-family="Liberation Sans" font-size="12.4" fill="#e9e9e9">A</text>
<circle cx="570.5" cy="996.3" r="7.6" stroke="#e9e9e9" stroke-width="1.6"/>
<path d="M576,1001.8 L583.4,1008.4" stroke="#e9e9e9" stroke-width="1.8" fill="none" />
<path d="M567.6,994.4 H573.4 M570.5,991.6 V997.2 M567.6,999.6 H573.4" stroke="#e9e9e9" stroke-width="1.2" fill="none" />
<path d="M608.2,993.2 V1003.8" stroke="#5c5c5c" stroke-width="1.6" fill="none" />
<path d="M617.4,993.4 L610.4,998.5 L617.4,1003.6 Z" stroke="#5c5c5c" stroke-width="1.4" fill="none" />
<path d="M657.2,993.4 L650,998.5 L657.2,1003.6 Z" stroke="#5c5c5c" stroke-width="1.4" fill="none" />
<path d="M977.4,993.4 L984.6,998.5 L977.4,1003.6 Z" stroke="#5c5c5c" stroke-width="1.4" fill="none" />
<path d="M1016.6,993.4 L1023.8,998.5 L1016.6,1003.6 Z" stroke="#5c5c5c" stroke-width="1.4" fill="none" />
<path d="M1026.2,993.2 V1003.8" stroke="#5c5c5c" stroke-width="1.6" fill="none" />
<path d="M1043.4,988.6 V1009.2" stroke="#666" stroke-width="1.3" fill="none" />
<circle cx="1065.8" cy="998.4" r="10.2" stroke="#fff" stroke-width="1.8"/>
<path d="M1069.2,993.6 L1061.4,998.4 L1069.2,1003.2 Z" stroke="#fff" stroke-width="1.4" fill="none" />
<circle cx="1106.2" cy="998.4" r="10.2" stroke="#5c5c5c" stroke-width="1.5"/>
<path d="M1103.2,993.6 L1111,998.4 L1103.2,1003.2 Z" stroke="#5c5c5c" stroke-width="1.3" fill="none" />
<path d="M1086.4,1021 V1055 M1126.5,1021 V1055" stroke="#1a5686" stroke-width="1" fill="none" />
<path d="M1019.6,1029.4 V1048.6 M1025.3,1029.4 V1048.6 M1031,1029.4 V1048.6 M1015.6,1033.2 H1035 M1015.6,1039 H1035 M1015.6,1044.8 H1035" stroke="#fff" stroke-width="2" fill="none" />
<path d="M1060.4,1029.4 V1046 M1066,1029.4 V1037 M1071.6,1029.4 V1036 M1056,1033.4 H1075.6 M1056,1038.8 H1063 M1056,1044.2 H1062.4" stroke="#e6f1fb" stroke-width="1.7" fill="none" />
<path d="M1066,1039.7 H1071.4 A4.9,4.9 0 0 1 1071.4,1049.5 H1066 V1046.3 H1071 A1.7,1.7 0 0 0 1071,1042.9 H1066 Z" stroke="#e6f1fb" stroke-width="1.5" fill="none" stroke-linejoin="round"/>
<path d="M1107,1048 H1098 V1030 H1109.4 L1115.6,1036 V1037.6 M1109.4,1030 V1036 H1115.6" stroke="#e6f1fb" stroke-width="1.5" fill="none" />
<path d="M1106.4,1039.7 H1111.8000000000002 A4.9,4.9 0 0 1 1111.8000000000002,1049.5 H1106.4 V1046.3 H1111.4 A1.7,1.7 0 0 0 1111.4,1042.9 H1106.4 Z" stroke="#e6f1fb" stroke-width="1.5" fill="none" stroke-linejoin="round"/>
<path d="M1139.6,1044 L1150.6,1030 L1156.2,1034.6 L1154.4,1037 M1139.6,1044 L1137.6,1046.4 L1140.4,1048.6 L1142.6,1046" stroke="#e6f1fb" stroke-width="1.5" fill="none" />
<path d="M1146.4,1039.7 H1151.8000000000002 A4.9,4.9 0 0 1 1151.8000000000002,1049.5 H1146.4 V1046.3 H1151.4 A1.7,1.7 0 0 0 1151.4,1042.9 H1146.4 Z" stroke="#e6f1fb" stroke-width="1.5" fill="none" stroke-linejoin="round"/>
<path d="M1180,1044 L1191,1030 L1196.6,1034.6 L1193,1039 M1180,1044 L1178,1046.4 L1180.8,1048.6 L1183,1046" stroke="#f0f0f0" stroke-width="1.5" fill="none" />
<path d="M1194.8,1042 A5,5 0 1 1 1190,1038.4" stroke="#2f86cf" stroke-width="1.7" fill="none" />
<path d="M1188.4,1035.6 L1192.6,1038.4 L1188.6,1041.2 Z" stroke="#2f86cf" stroke-width="1" fill="#2f86cf" />
<path d="M1216.6,1029.6 H1237.2 V1049.4 H1216.6 Z M1216.6,1032.6 H1237.2 M1220.6,1038 H1233 M1230.4,1035.6 L1233.2,1038 L1230.4,1040.4 M1233,1044 H1220.6 M1223.2,1041.6 L1220.4,1044 L1223.2,1046.4" stroke="#e9e9e9" stroke-width="1.5" fill="none" />
<path d="M1250.6000000000001,1037.4 L1255.2,1042.6 L1259.8,1037.4" stroke="#e9e9e9" stroke-width="1.8" fill="none" />
<ellipse cx="455.2" cy="199.2" rx="3.5" ry="3.1" stroke="#ececec" stroke-width="1.5" transform="rotate(25 455.2 199.2)"/><ellipse cx="455.2" cy="208.3" rx="3.5" ry="3.1" stroke="#ececec" stroke-width="1.5" transform="rotate(-25 455.2 208.3)"/>
<path d="M458.2,201 L472,208.6 L468.6,210.4 L458,205 M458.2,206.6 L472,199 L468.6,197.2 L458,202.6" stroke="#ececec" stroke-width="1.5" fill="none" stroke-linejoin="round"/>
<path d="M457.6,238.6 H451.8 V222.6 H464.6 V225 M457.8,225.4 H466.6 L472,230.6 V241.6 H457.8 Z M466.6,225.4 V230.6 H472" stroke="#ececec" stroke-width="1.5" fill="none" />
<path d="M458,269.6 H451.8 V254.6 H456.6 M464,254.6 H468.6 V256.6 M456.6,256 V252.6 H464 V256 Z M459.4,258.4 H466.8 L472,263.6 V269.8 H459.4 Z M466.8,258.4 V263.6 H472" stroke="#ececec" stroke-width="1.5" fill="none" />
<path d="M470.4,276.6 L473.2,279 L467.6,285.8 L464.8,283.4 Z M462.4,281.6 L469,287.8 M461.6,282.2 L451.4,288.6 L453.6,291.2 L455.2,290.2 L456.6,293.6 L458.6,292.6 L460.6,297.8 L468.4,288.4 Z" stroke="#ececec" stroke-width="1.45" fill="none" stroke-linejoin="round"/>
<path d="M455.6,308.6 L467.2,320.2 M467.2,308.6 L455.6,320.2" stroke="#ececec" stroke-width="1.5" fill="none" />
<path d="M452,416.8 A19,19 0 0 1 470.4,399.6" stroke="#5e5e5e" stroke-width="1.3" fill="none" />
<path d="M458,576 L454,587.8 H469.6 L465.6,576 Z" stroke="#b9b866" stroke-width="1.3" fill="none" stroke-linejoin="round"/>
<circle cx="461.8" cy="573" r="2.3" stroke="#b9b866" stroke-width="1.3"/>
<path d="M452.4,590.4 H471" stroke="#d3e6f6" stroke-width="1.7" fill="none" />
<path d="M451.6,626.6 H472 V643.6 H451.6 Z M451.6,629.8 H472" stroke="#ececec" stroke-width="1.5" fill="none" />
<path d="M460.4,634.6 H469.6 M460.4,639.4 H469.6" stroke="#ececec" stroke-width="1.7" fill="none" />
<path d="M455.4,632.6 L457.4,636.2 H453.4 Z" stroke="#ececec" stroke-width="1" fill="#ececec" />
<circle cx="455.4" cy="639.6" r="1.9" fill="#ececec"/>
<path d="M453.6,661 V666.6 Q453.6,669.4 456.4,669.4 H468 M464.6,665.8 L468.4,669.4 L464.6,673" stroke="#ececec" stroke-width="1.4" fill="none" />
<path d="M471.60,837.57 L471.60,841.63 L469.29,842.15 L468.84,843.24 L470.10,845.24 L467.24,848.10 L465.24,846.84 L464.15,847.29 L463.63,849.60 L459.57,849.60 L459.05,847.29 L457.96,846.84 L455.96,848.10 L453.10,845.24 L454.36,843.24 L453.91,842.15 L451.60,841.63 L451.60,837.57 L453.91,837.05 L454.36,835.96 L453.10,833.96 L455.96,831.10 L457.96,832.36 L459.05,831.91 L459.57,829.60 L463.63,829.60 L464.15,831.91 L465.24,832.36 L467.24,831.10 L470.10,833.96 L468.84,835.96 L469.29,837.05Z" stroke="#ececec" stroke-width="1.4" fill="none" stroke-linejoin="round"/><circle cx="461.6" cy="839.6" r="5.4" stroke="#ececec" stroke-width="1.4" fill="none"/>
</svg>
</body></html>
